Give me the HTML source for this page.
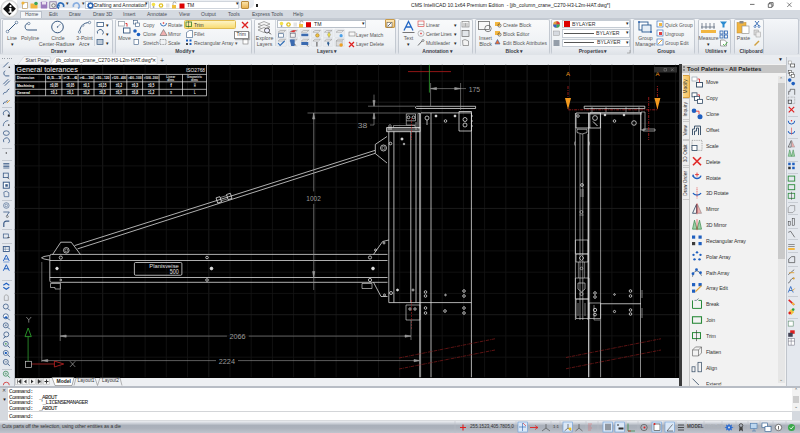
<!DOCTYPE html><html><head><meta charset='utf-8'><style>
*{margin:0;padding:0;box-sizing:border-box}
html,body{width:800px;height:433px;overflow:hidden;background:#dfe3e9;font-family:"Liberation Sans",sans-serif;color:#333}
.a{position:absolute}
.t{position:absolute;white-space:nowrap;line-height:1}
svg{position:absolute;overflow:visible}
</style></head><body><div class="a" style="left:0px;top:0px;width:800px;height:10px;background:#ffffff"></div>
<div class="a" style="left:17px;top:0px;width:237px;height:9.4px;background:linear-gradient(#eceff3,#e3e7ed);border-bottom:1px solid #f8f9fb;border-radius:0 0 5px 0"></div>
<div class="t" style="left:411px;top:2.7px;font-size:5.05px;color:#222;">CMS IntelliCAD 10.1x64 Premium Edition&nbsp; - [jib_column_crane_C270-H3-L2m-HAT.dwg*]</div>
<svg style="left:748.5px;top:0px;" width="8" height="8" viewBox="0 0 8 8"><path d="M1 4.4H5.5" stroke="#333" stroke-width="0.7"/></svg>
<svg style="left:767px;top:1px;" width="8" height="8" viewBox="0 0 8 8"><path d="M1.3 2.8h3.6v3.6h-3.6z M2.5 2.8V1.6h3.6v3.6H4.9" fill="none" stroke="#333" stroke-width="0.7"/></svg>
<svg style="left:786px;top:1px;" width="8" height="8" viewBox="0 0 8 8"><path d="M1.2 1.6L5.6 6M5.6 1.6L1.2 6" stroke="#333" stroke-width="0.6"/></svg>
<svg style="left:21px;top:1px;" width="8" height="8" viewBox="0 0 8 8"><rect x="1.5" y="1.5" width="5" height="6" fill="#fff" stroke="#b08a4a" stroke-width="0.6"/><circle cx="2" cy="2" r="1.6" fill="#f0b43c"/></svg>
<svg style="left:30px;top:1px;" width="8" height="8" viewBox="0 0 8 8"><path d="M0.5 2.5h3l1 1h3v4h-7z" fill="#f2b640"/><circle cx="6" cy="2.5" r="1.8" fill="#3ca454"/></svg>
<svg style="left:40px;top:1px;" width="8" height="8" viewBox="0 0 8 8"><rect x="0.8" y="0.8" width="6.4" height="6.6" rx="0.5" fill="#9b7bbd"/><rect x="2" y="1" width="4" height="2.5" fill="#e9e3f0"/></svg>
<svg style="left:49px;top:1px;" width="8" height="8" viewBox="0 0 8 8"><rect x="0.8" y="0.8" width="6.4" height="6.6" fill="#eee" stroke="#7b6a9a" stroke-width="0.8"/><circle cx="4.5" cy="4.5" r="1.8" fill="none" stroke="#555" stroke-width="0.7"/></svg>
<svg style="left:57px;top:1.5px;" width="8" height="8" viewBox="0 0 8 8"><path d="M2 6.5A3 3 0 1 1 6.5 5" fill="none" stroke="#2b6cb8" stroke-width="1.6"/><path d="M0.5 3.5l2-1l0.5 2.2z" fill="#2b6cb8"/></svg>
<div class="t" style="left:65.5px;top:2.2px;font-size:4.5px;color:#333;">&#9662;</div>
<svg style="left:72px;top:1.5px;" width="8" height="8" viewBox="0 0 8 8"><path d="M6 6.5A3 3 0 1 0 1.5 5" fill="none" stroke="#88aee0" stroke-width="1.6"/></svg>
<div class="t" style="left:81.5px;top:2.2px;font-size:4.5px;color:#333;">&#9662;</div>
<div class="a" style="left:85px;top:0.8px;width:64px;height:8.4px;background:#fff;border:1px solid #c3cad3"></div>
<svg style="left:86.5px;top:2px;" width="7" height="7" viewBox="0 0 7 7"><circle cx="3.5" cy="3.5" r="2.3" fill="none" stroke="#2a62b0" stroke-width="1.4"/><circle cx="3.5" cy="3.5" r="3.2" fill="none" stroke="#2a62b0" stroke-width="0.8" stroke-dasharray="1 1"/></svg>
<div class="t" style="left:94px;top:2.8px;font-size:5.0px;color:#222;">Drafting and Annotation</div>
<div class="t" style="left:144.5px;top:2.4px;font-size:4.5px;color:#222;">&#9662;</div>
<div class="a" style="left:150px;top:0.8px;width:89px;height:8.4px;background:#fff;border:1px solid #d0d5dc"></div>
<svg style="left:151px;top:1.5px;" width="34" height="7" viewBox="0 0 34 7"><circle cx="2.5" cy="2.5" r="1.8" fill="#f4e04a"/><rect x="1.8" y="4" width="1.5" height="2" fill="#aaa"/><circle cx="10" cy="3.5" r="2.3" fill="#e0c020"/><circle cx="10" cy="3.5" r="1" fill="#fff"/><rect x="15" y="1.5" width="3.5" height="4" fill="#e5e5e5"/><rect x="21" y="3" width="4" height="3.5" fill="#f0c040"/><path d="M22 3V1.5a1.5 1.5 0 0 1 3 0" fill="none" stroke="#777" stroke-width="0.6"/><rect x="28.5" y="1.5" width="5" height="5" fill="#dd0000"/></svg>
<div class="t" style="left:187px;top:2.8px;font-size:5.0px;color:#222;">TM</div>
<div class="t" style="left:235.5px;top:2.4px;font-size:4.5px;color:#222;">&#9662;</div>
<div class="a" style="left:241px;top:1px;width:8px;height:8px;background:linear-gradient(#fbe3a8,#e9b455);border:1px solid #b88a3c;border-radius:1px"></div>
<div class="a" style="left:256px;top:3.5px;width:1.5px;height:3px;background:#222"></div>
<div class="a" style="left:0px;top:10px;width:800px;height:8.5px;background:#d5dae1"></div>
<div class="a" style="left:20px;top:10.5px;width:22px;height:8.5px;background:#f4f6f9;border:1px solid #b9c0ca;border-bottom:none"></div>
<div class="t" style="left:25px;top:12.3px;font-size:5.0px;color:#4a4f57;">Home</div>
<div class="t" style="left:49px;top:12.3px;font-size:5.0px;color:#4a4f57;">Edit</div>
<div class="t" style="left:69px;top:12.3px;font-size:5.0px;color:#4a4f57;">Draw</div>
<div class="t" style="left:93px;top:12.3px;font-size:5.0px;color:#4a4f57;">Draw 3D</div>
<div class="t" style="left:123px;top:12.3px;font-size:5.0px;color:#4a4f57;">Insert</div>
<div class="t" style="left:147px;top:12.3px;font-size:5.0px;color:#4a4f57;">Annotate</div>
<div class="t" style="left:179px;top:12.3px;font-size:5.0px;color:#4a4f57;">View</div>
<div class="t" style="left:201px;top:12.3px;font-size:5.0px;color:#4a4f57;">Output</div>
<div class="t" style="left:228px;top:12.3px;font-size:5.0px;color:#4a4f57;">Tools</div>
<div class="t" style="left:252px;top:12.3px;font-size:5.0px;color:#4a4f57;">Express Tools</div>
<div class="t" style="left:293px;top:12.3px;font-size:5.0px;color:#4a4f57;">Help</div>
<svg style="left:0px;top:0px;" width="19" height="19" viewBox="0 0 19 19"><circle cx="9.5" cy="8.8" r="8.6" fill="#e9e9e9" stroke="#bdbdbd" stroke-width="0.6"/><circle cx="9.5" cy="8.8" r="7.2" fill="#fff"/><path d="M9.5 2.4L15.9 8.8L9.5 15.2L3.1 8.8z" fill="#111"/><circle cx="10.5" cy="6.2" r="1.1" fill="#fff"/><path d="M9.2 8h2.2v3.5h1.2v1.2H8.6v-1.2h1.1V9.2h-0.7z" fill="#fff"/></svg>
<div class="a" style="left:0px;top:17.8px;width:800px;height:3px;background:#d5dae1"></div>
<div class="a" style="left:0px;top:18px;width:799px;height:37px;background:linear-gradient(#f4f6f9,#dfe3e9);border:1px solid #c3c9d2;border-radius:2px"></div>
<div class="a" style="left:1.5px;top:18.5px;width:111.0px;height:35.5px;background:linear-gradient(#f9fafb,#eef1f4 75%,#e6e9ed);border:1px solid #c3c9d1;border-bottom-color:#aeb5bf;border-radius:2px"></div>
<div class="a" style="left:2.5px;top:47.5px;width:109.0px;height:6px;background:linear-gradient(#eaedf1,#dfe3e8)"></div>
<div class="t" style="left:9.0px;width:100px;text-align:center;top:48.9px;font-size:5.0px;color:#3b4049;font-weight:bold">Draw&thinsp;&#9662;</div>
<div class="a" style="left:114.5px;top:18.5px;width:137.5px;height:35.5px;background:linear-gradient(#f9fafb,#eef1f4 75%,#e6e9ed);border:1px solid #c3c9d1;border-bottom-color:#aeb5bf;border-radius:2px"></div>
<div class="a" style="left:115.5px;top:47.5px;width:135.5px;height:6px;background:linear-gradient(#eaedf1,#dfe3e8)"></div>
<div class="t" style="left:135.25px;width:100px;text-align:center;top:48.9px;font-size:5.0px;color:#3b4049;font-weight:bold">Modify&thinsp;&#9662;</div>
<div class="a" style="left:254px;top:18.5px;width:142px;height:35.5px;background:linear-gradient(#f9fafb,#eef1f4 75%,#e6e9ed);border:1px solid #c3c9d1;border-bottom-color:#aeb5bf;border-radius:2px"></div>
<div class="a" style="left:255px;top:47.5px;width:140px;height:6px;background:linear-gradient(#eaedf1,#dfe3e8)"></div>
<div class="t" style="left:277.0px;width:100px;text-align:center;top:48.9px;font-size:5.0px;color:#3b4049;font-weight:bold">Layers&thinsp;&#9662;</div>
<div class="a" style="left:398px;top:18.5px;width:75px;height:35.5px;background:linear-gradient(#f9fafb,#eef1f4 75%,#e6e9ed);border:1px solid #c3c9d1;border-bottom-color:#aeb5bf;border-radius:2px"></div>
<div class="a" style="left:399px;top:47.5px;width:73px;height:6px;background:linear-gradient(#eaedf1,#dfe3e8)"></div>
<div class="t" style="left:387.5px;width:100px;text-align:center;top:48.9px;font-size:5.0px;color:#3b4049;font-weight:bold">Annotation&thinsp;&#9662;</div>
<div class="a" style="left:475px;top:18.5px;width:74.70000000000005px;height:35.5px;background:linear-gradient(#f9fafb,#eef1f4 75%,#e6e9ed);border:1px solid #c3c9d1;border-bottom-color:#aeb5bf;border-radius:2px"></div>
<div class="a" style="left:476px;top:47.5px;width:72.70000000000005px;height:6px;background:linear-gradient(#eaedf1,#dfe3e8)"></div>
<div class="t" style="left:464.35px;width:100px;text-align:center;top:48.9px;font-size:5.0px;color:#3b4049;font-weight:bold">Block&thinsp;&#9662;</div>
<div class="a" style="left:551px;top:18.5px;width:80.29999999999995px;height:35.5px;background:linear-gradient(#f9fafb,#eef1f4 75%,#e6e9ed);border:1px solid #c3c9d1;border-bottom-color:#aeb5bf;border-radius:2px"></div>
<div class="a" style="left:552px;top:47.5px;width:78.29999999999995px;height:6px;background:linear-gradient(#eaedf1,#dfe3e8)"></div>
<div class="t" style="left:543.15px;width:100px;text-align:center;top:48.9px;font-size:5.0px;color:#3b4049;font-weight:bold">Properties&thinsp;&#9662;</div>
<div class="a" style="left:633px;top:18.5px;width:62.299999999999955px;height:35.5px;background:linear-gradient(#f9fafb,#eef1f4 75%,#e6e9ed);border:1px solid #c3c9d1;border-bottom-color:#aeb5bf;border-radius:2px"></div>
<div class="a" style="left:634px;top:47.5px;width:60.299999999999955px;height:6px;background:linear-gradient(#eaedf1,#dfe3e8)"></div>
<div class="t" style="left:616.15px;width:100px;text-align:center;top:48.9px;font-size:5.0px;color:#3b4049;font-weight:bold">Groups</div>
<div class="a" style="left:697.7px;top:18.5px;width:33.299999999999955px;height:35.5px;background:linear-gradient(#f9fafb,#eef1f4 75%,#e6e9ed);border:1px solid #c3c9d1;border-bottom-color:#aeb5bf;border-radius:2px"></div>
<div class="a" style="left:698.7px;top:47.5px;width:31.299999999999955px;height:6px;background:linear-gradient(#eaedf1,#dfe3e8)"></div>
<div class="t" style="left:666.35px;width:100px;text-align:center;top:48.9px;font-size:5.0px;color:#3b4049;font-weight:bold">Utilities&thinsp;&#9662;</div>
<div class="a" style="left:733.6px;top:18.5px;width:30.899999999999977px;height:35.5px;background:linear-gradient(#f9fafb,#eef1f4 75%,#e6e9ed);border:1px solid #c3c9d1;border-bottom-color:#aeb5bf;border-radius:2px"></div>
<div class="a" style="left:734.6px;top:47.5px;width:28.899999999999977px;height:6px;background:linear-gradient(#eaedf1,#dfe3e8)"></div>
<div class="t" style="left:701.05px;width:100px;text-align:center;top:48.9px;font-size:5.0px;color:#3b4049;font-weight:bold">Clipboard</div>
<div class="a" style="left:0px;top:54px;width:800px;height:3px;background:#dfe3e8"></div>
<svg style="left:5px;top:20px;" width="14" height="14" viewBox="0 0 14 14"><path d="M2.5 11.5L11.5 2.5" stroke="#36577f" stroke-width="1"/><circle cx="2.5" cy="11.5" r="1.3" fill="#fff" stroke="#36577f" stroke-width="0.6"/><circle cx="11.5" cy="2.5" r="1.3" fill="#fff" stroke="#36577f" stroke-width="0.6"/></svg>
<div class="t" style="left:-38px;width:100px;text-align:center;top:36px;font-size:5.2px;color:#555;">Line</div>
<div class="t" style="left:-38px;width:100px;text-align:center;top:41.5px;font-size:5.2px;color:#222;">&#9662;</div>
<svg style="left:23px;top:20px;" width="15" height="14" viewBox="0 0 15 14"><path d="M5.5 3.5C2.5 3.5 1.5 6 2.5 8.5C3 9.8 4 10 6 10H14" fill="none" stroke="#36577f" stroke-width="1"/><circle cx="5.8" cy="3.5" r="1.2" fill="#fff" stroke="#36577f" stroke-width="0.6"/></svg>
<div class="t" style="left:-20px;width:100px;text-align:center;top:36px;font-size:5.2px;color:#555;">Polyline</div>
<svg style="left:50px;top:20px;" width="15" height="14" viewBox="0 0 15 14"><circle cx="7.5" cy="7" r="5.8" fill="none" stroke="#36577f" stroke-width="1"/><path d="M7.5 7L10.5 4" stroke="#36577f" stroke-width="0.6"/><circle cx="7.5" cy="7" r="0.7" fill="#36577f"/></svg>
<div class="t" style="left:8px;width:100px;text-align:center;top:36px;font-size:5.2px;color:#555;">Circle</div>
<div class="t" style="left:7px;width:100px;text-align:center;top:41.5px;font-size:5.2px;color:#555;">Center-Radius&#9662;</div>
<svg style="left:77px;top:20px;" width="15" height="14" viewBox="0 0 15 14"><path d="M2.5 12C3 6 7 2.5 12.5 2.5" fill="none" stroke="#36577f" stroke-width="1"/><circle cx="2.5" cy="12" r="1.2" fill="#fff" stroke="#36577f" stroke-width="0.6"/><circle cx="12.5" cy="2.5" r="1.2" fill="#fff" stroke="#36577f" stroke-width="0.6"/><circle cx="6" cy="5.5" r="0.9" fill="#fff" stroke="#36577f" stroke-width="0.5"/></svg>
<div class="t" style="left:34.5px;width:100px;text-align:center;top:36px;font-size:5.2px;color:#555;">3-Point</div>
<div class="t" style="left:34.5px;width:100px;text-align:center;top:41.5px;font-size:5.2px;color:#555;">Arc&#9662;</div>
<div class="a" style="left:94px;top:20px;width:0.7px;height:26px;background:#d3d7dd"></div>
<svg style="left:96px;top:21px;" width="14" height="26" viewBox="0 0 14 26"><rect x="1" y="1.5" width="6.5" height="4" fill="#fff" stroke="#36577f" stroke-width="0.8"/><path d="M1.5 12.5a3 3 0 1 1 5 1" fill="none" stroke="#36577f" stroke-width="0.9"/><rect x="1" y="18.5" width="6" height="5" fill="#bfcbd8" stroke="#36577f" stroke-width="0.7"/><text x="9.5" y="5.5" font-size="4.5" fill="#222">&#9662;</text><text x="9.5" y="14.5" font-size="4.5" fill="#222">&#9662;</text><text x="9.5" y="23.5" font-size="4.5" fill="#222">&#9662;</text></svg>
<svg style="left:117px;top:20px;" width="15" height="15" viewBox="0 0 15 15"><rect x="1.5" y="1.5" width="6" height="4.5" fill="#fff" stroke="#8a94a0" stroke-width="0.7"/><rect x="6.5" y="8" width="6.5" height="5" fill="#fff" stroke="#36577f" stroke-width="0.9"/><path d="M8.5 3.5H10V6.5" fill="none" stroke="#d22" stroke-width="0.9"/></svg>
<div class="t" style="left:74.5px;width:100px;text-align:center;top:36px;font-size:5.2px;color:#555;">Move</div>
<svg style="left:133px;top:20px;" width="9" height="27" viewBox="0 0 9 27"><rect x="0.5" y="0.5" width="4" height="3.5" fill="#fff" stroke="#36577f" stroke-width="0.6"/><rect x="2.5" y="3" width="4" height="3.5" fill="#fff" stroke="#36577f" stroke-width="0.6"/><circle cx="2" cy="11" r="1.8" fill="#1a5fc0"/><circle cx="5.5" cy="14.5" r="1.8" fill="#1a5fc0"/><rect x="1" y="19.5" width="4.5" height="5" fill="#fff" stroke="#36577f" stroke-width="0.6"/></svg>
<div class="t" style="left:143px;top:23.6px;font-size:4.95px;color:#555;">Copy</div>
<div class="t" style="left:143px;top:32.6px;font-size:4.95px;color:#555;">Clone</div>
<div class="t" style="left:143px;top:41.6px;font-size:4.95px;color:#555;">Stretch</div>
<svg style="left:159px;top:20px;" width="9" height="27" viewBox="0 0 9 27"><path d="M1.5 3a3 3 0 0 0 6 0" fill="none" stroke="#2a6ab5" stroke-width="0.9"/><circle cx="4.5" cy="3" r="0.8" fill="#d22"/><path d="M4.5 9.5L1 15.5H8z" fill="#f0b0b0" stroke="#666" stroke-width="0.6"/><rect x="1" y="19.5" width="6" height="5" fill="none" stroke="#666" stroke-width="0.6" stroke-dasharray="1 0.6"/></svg>
<div class="t" style="left:168px;top:23.6px;font-size:4.95px;color:#555;">Rotate</div>
<div class="t" style="left:168px;top:32.6px;font-size:4.95px;color:#555;">Mirror</div>
<div class="t" style="left:168px;top:41.6px;font-size:4.95px;color:#555;">Scale</div>
<div class="a" style="left:184.4px;top:19.8px;width:52px;height:9px;background:linear-gradient(#fdf4c4,#f9dc74);border:1px solid #e0bb50;border-radius:1.5px"></div>
<svg style="left:185px;top:20px;" width="9" height="27" viewBox="0 0 9 27"><rect x="1" y="2" width="5.5" height="4.5" fill="none" stroke="#4a8a30" stroke-width="0.9"/><path d="M3.5 1v6.5" stroke="#333" stroke-width="0.5"/><path d="M1.5 17.5V12.5L4.5 10.5H7.5V17.5z" fill="#fff" stroke="#36577f" stroke-width="0.6"/><rect x="1" y="19.5" width="2" height="2" fill="#1a5fc0"/><rect x="4.5" y="19.5" width="2" height="2" fill="#1a5fc0"/><rect x="1" y="23" width="2" height="2" fill="#444"/><rect x="4.5" y="23" width="2" height="2" fill="#1a5fc0"/></svg>
<div class="t" style="left:194px;top:23.6px;font-size:4.95px;color:#333;">Trim</div>
<div class="t" style="left:194px;top:32.6px;font-size:4.95px;color:#555;">Fillet</div>
<div class="t" style="left:194px;top:41.6px;font-size:4.95px;color:#555;">Rectangular Array &#9662;</div>
<svg style="left:241px;top:21px;" width="8" height="8" viewBox="0 0 8 8"><path d="M1 1L7 7M7 1L1 7" stroke="#dd2222" stroke-width="1.4"/></svg>
<svg style="left:242px;top:38px;" width="9" height="8" viewBox="0 0 9 8"><rect x="1" y="1" width="5" height="5" fill="#fff" stroke="#777" stroke-width="0.6"/></svg>
<div class="a" style="left:234px;top:31px;width:15px;height:8px;background:#fff;border:1px solid #8a8a8a;box-shadow:1px 1px 1px rgba(0,0,0,.25)"></div>
<div class="t" style="left:236.5px;top:32.8px;font-size:4.8px;color:#333;">Trim</div>
<svg style="left:256px;top:20px;" width="16" height="15" viewBox="0 0 16 15"><path d="M2 4L8 1.5L14 4L8 6.5z" fill="#f4f4f4" stroke="#777" stroke-width="0.6"/><path d="M2 7L8 4.5L14 7L8 9.5z" fill="#f4f4f4" stroke="#777" stroke-width="0.6"/><path d="M2 10L8 7.5L14 10L8 12.5z" fill="#f4f4f4" stroke="#777" stroke-width="0.6"/><circle cx="11" cy="10.5" r="2.5" fill="#eef" stroke="#333" stroke-width="0.8"/><path d="M12.8 12.3L14.8 14.3" stroke="#333" stroke-width="1"/></svg>
<div class="t" style="left:214.5px;width:100px;text-align:center;top:36px;font-size:5.2px;color:#555;">Explore</div>
<div class="t" style="left:214.5px;width:100px;text-align:center;top:41.8px;font-size:5.2px;color:#555;">Layers</div>
<div class="a" style="left:275px;top:20px;width:0.7px;height:26px;background:#d3d7dd"></div>
<div class="a" style="left:277.3px;top:19.9px;width:88.7px;height:8.4px;background:#fff;border:1px solid #b9c0c9"></div>
<svg style="left:279px;top:20.5px;" width="34" height="7" viewBox="0 0 34 7"><circle cx="2.5" cy="2.5" r="1.8" fill="#f4e04a"/><rect x="1.8" y="4" width="1.5" height="2" fill="#aaa"/><circle cx="9.5" cy="3.5" r="2.3" fill="#e0c020"/><circle cx="9.5" cy="3.5" r="1" fill="#fff"/><rect x="14.5" y="1.5" width="3.5" height="4" fill="#e5e5e5"/><rect x="20" y="3" width="4" height="3.5" fill="#f0c040"/><path d="M21 3V1.5a1.5 1.5 0 0 1 3 0" fill="none" stroke="#777" stroke-width="0.6"/><rect x="27" y="1.2" width="5" height="5" fill="#dd0000"/></svg>
<div class="t" style="left:314px;top:21.5px;font-size:5.2px;color:#222;">TM</div>
<div class="t" style="left:362px;top:21.8px;font-size:4.5px;color:#222;">&#9662;</div>
<div class="a" style="left:384.6px;top:19.3px;width:10px;height:9px;background:linear-gradient(#fde8b8,#eec070);border:1px solid #c99a48;border-radius:1px"></div>
<svg style="left:386px;top:20.5px;" width="7" height="7" viewBox="0 0 7 7"><rect x="1" y="1.5" width="5" height="4.5" fill="#fff" stroke="#444" stroke-width="0.5"/><path d="M2 5L5 2" stroke="#333" stroke-width="0.7"/></svg>
<svg style="left:276px;top:28.8px;" width="72" height="19" viewBox="0 0 72 19"><g transform="translate(0.6,0.2)"><rect x="0" y="0" width="10" height="8.4" rx="1" fill="#e9ecf0" stroke="#d3d8de" stroke-width="0.4"/><path d="M1.5 3L3.5 1.3H9L7 3z" fill="#f2f2f2" stroke="#8a8a8a" stroke-width="0.5"/><rect x="2" y="4.5" width="5" height="3.5" fill="#fff" stroke="#4a6a90" stroke-width="0.7"/></g><g transform="translate(12.2,0.2)"><rect x="0" y="0" width="10" height="8.4" rx="1" fill="#e9ecf0" stroke="#d3d8de" stroke-width="0.4"/><path d="M1.5 3L3.5 1.3H9L7 3z" fill="#f2f2f2" stroke="#8a8a8a" stroke-width="0.5"/><path d="M2 2.5L5 1H8L6 3z" fill="#d33"/><rect x="2" y="4" width="5" height="4" fill="#f3f3f3" stroke="#556" stroke-width="0.6"/></g><g transform="translate(23.8,0.2)"><rect x="0" y="0" width="10" height="8.4" rx="1" fill="#e9ecf0" stroke="#d3d8de" stroke-width="0.4"/><path d="M1.5 3L3.5 1.3H9L7 3z" fill="#f2f2f2" stroke="#8a8a8a" stroke-width="0.5"/><rect x="1.5" y="4.5" width="7" height="2.5" fill="#3a6ab0"/></g><g transform="translate(35.4,0.2)"><rect x="0" y="0" width="10" height="8.4" rx="1" fill="#e9ecf0" stroke="#d3d8de" stroke-width="0.4"/><path d="M1.5 3L3.5 1.3H9L7 3z" fill="#f2f2f2" stroke="#8a8a8a" stroke-width="0.5"/><circle cx="6" cy="6.2" r="1.8" fill="#f0c040" stroke="#7a5a20" stroke-width="0.4"/></g><g transform="translate(47.0,0.2)"><rect x="0" y="0" width="10" height="8.4" rx="1" fill="#e9ecf0" stroke="#d3d8de" stroke-width="0.4"/><path d="M1.5 3L3.5 1.3H9L7 3z" fill="#f2f2f2" stroke="#8a8a8a" stroke-width="0.5"/><path d="M6 2.5L7.5 5.5L6 8.5L4.5 5.5z" fill="#f0e040" stroke="#777" stroke-width="0.4"/></g><g transform="translate(58.6,0.2)"><rect x="0" y="0" width="10" height="8.4" rx="1" fill="#e9ecf0" stroke="#d3d8de" stroke-width="0.4"/><path d="M1.5 3L3.5 1.3H9L7 3z" fill="#f2f2f2" stroke="#8a8a8a" stroke-width="0.5"/><circle cx="6.5" cy="6.5" r="1.6" fill="#4aa0e8"/></g><g transform="translate(0.6,9.0)"><rect x="0" y="0" width="10" height="8.4" rx="1" fill="#e9ecf0" stroke="#d3d8de" stroke-width="0.4"/><path d="M1.5 3L3.5 1.3H9L7 3z" fill="#f2f2f2" stroke="#8a8a8a" stroke-width="0.5"/><path d="M1.5 5L3.5 7.5L8 3" fill="none" stroke="#2a6ab5" stroke-width="1.1"/></g><g transform="translate(12.2,9.0)"><rect x="0" y="0" width="10" height="8.4" rx="1" fill="#e9ecf0" stroke="#d3d8de" stroke-width="0.4"/><path d="M1.5 3L3.5 1.3H9L7 3z" fill="#f2f2f2" stroke="#8a8a8a" stroke-width="0.5"/><path d="M1.5 1.5H6.5V8H3z" fill="#3a6ab0"/><path d="M6 6L8 7.5" stroke="#333" stroke-width="0.6"/></g><g transform="translate(23.8,9.0)"><rect x="0" y="0" width="10" height="8.4" rx="1" fill="#e9ecf0" stroke="#d3d8de" stroke-width="0.4"/><path d="M1.5 3L3.5 1.3H9L7 3z" fill="#f2f2f2" stroke="#8a8a8a" stroke-width="0.5"/><rect x="1.5" y="4" width="7" height="3" fill="#3a6ab0"/><path d="M7 7L8.5 8.5" stroke="#333" stroke-width="0.6"/></g><g transform="translate(35.4,9.0)"><rect x="0" y="0" width="10" height="8.4" rx="1" fill="#e9ecf0" stroke="#d3d8de" stroke-width="0.4"/><path d="M1.5 3L3.5 1.3H9L7 3z" fill="#f2f2f2" stroke="#8a8a8a" stroke-width="0.5"/><path d="M5.5 4V8.5" stroke="#666" stroke-width="1.2"/></g><g transform="translate(47.0,9.0)"><rect x="0" y="0" width="10" height="8.4" rx="1" fill="#e9ecf0" stroke="#d3d8de" stroke-width="0.4"/><path d="M1.5 3L3.5 1.3H9L7 3z" fill="#f2f2f2" stroke="#8a8a8a" stroke-width="0.5"/><path d="M5 3.5L6.5 5L5.5 8.5L4 5z" fill="#2a5a90"/></g><g transform="translate(58.6,9.0)"><rect x="0" y="0" width="10" height="8.4" rx="1" fill="#e9ecf0" stroke="#d3d8de" stroke-width="0.4"/><path d="M1.5 3L3.5 1.3H9L7 3z" fill="#f2f2f2" stroke="#8a8a8a" stroke-width="0.5"/><rect x="1.5" y="3" width="6" height="5" fill="#ddd" stroke="#888" stroke-width="0.4"/><circle cx="6.5" cy="7" r="1.7" fill="#f0a020"/></g></svg>
<svg style="left:348px;top:30.5px;" width="8" height="17" viewBox="0 0 8 17"><rect x="1" y="1" width="6" height="4" fill="#f6f6f6" stroke="#666" stroke-width="0.5"/><path d="M1 11L6 16M6 11L1 16" stroke="#dd2222" stroke-width="1.3"/></svg>
<div class="t" style="left:356px;top:33.5px;font-size:4.95px;color:#555;">Layer Match</div>
<div class="t" style="left:356px;top:42.5px;font-size:4.95px;color:#555;">Layer Delete</div>
<svg style="left:401px;top:20px;" width="15" height="14" viewBox="0 0 15 14"><path d="M3 10.5L7.5 1.5L12 10.5M4.8 7H10.2" fill="none" stroke="#2266c4" stroke-width="1.3"/><path d="M1.5 12.5H13.5" stroke="#555" stroke-width="0.8"/></svg>
<div class="t" style="left:358.5px;width:100px;text-align:center;top:36px;font-size:5.2px;color:#555;">Text</div>
<div class="t" style="left:358.5px;width:100px;text-align:center;top:41.5px;font-size:5.2px;color:#222;">&#9662;</div>
<svg style="left:417px;top:20px;" width="9" height="27" viewBox="0 0 9 27"><rect x="1" y="1" width="6" height="5.5" fill="none" stroke="#d33" stroke-width="0.6"/><path d="M1 4.5H7" stroke="#777" stroke-width="0.5"/><circle cx="4" cy="13.5" r="3" fill="none" stroke="#999" stroke-width="0.6"/><path d="M3 13.5H5M4 12.5V14.5" stroke="#d33" stroke-width="0.6"/><path d="M1 25.5L5 21" stroke="#333" stroke-width="0.7"/><circle cx="6" cy="20.5" r="1" fill="none" stroke="#333" stroke-width="0.5"/></svg>
<div class="t" style="left:426px;top:23.6px;font-size:4.95px;color:#555;">Linear</div>
<div class="t" style="left:426px;top:32.6px;font-size:4.95px;color:#555;letter-spacing:-0.2px">Center Lines</div>
<div class="t" style="left:426px;top:41.6px;font-size:4.95px;color:#555;">Multileader</div>
<div class="t" style="left:454px;top:24.0px;font-size:4.5px;color:#222;">&#9662;</div>
<div class="t" style="left:454px;top:33.0px;font-size:4.5px;color:#222;">&#9662;</div>
<div class="t" style="left:454px;top:42.0px;font-size:4.5px;color:#222;">&#9662;</div>
<div class="a" style="left:459.5px;top:22px;width:0.6px;height:24px;background:#d3d7dd"></div>
<svg style="left:461px;top:20px;" width="10" height="27" viewBox="0 0 10 27"><rect x="1" y="1.5" width="7" height="5.5" fill="#f3f3f3" stroke="#777" stroke-width="0.6"/><path d="M3 3V6.5M4.5 3V6.5M6 3V6.5" stroke="#666" stroke-width="0.5"/><rect x="1" y="10.5" width="7" height="6" fill="#e2e6ea" stroke="#555" stroke-width="0.6"/><path d="M1.5 20.5L4 19.5L7.5 21V25.5H2z" fill="#f3f3f3" stroke="#666" stroke-width="0.6"/></svg>
<svg style="left:477px;top:20px;" width="16" height="14" viewBox="0 0 16 14"><rect x="1.5" y="1.5" width="11" height="8" fill="#f8f8f8" stroke="#555" stroke-width="0.7"/><circle cx="11" cy="8.5" r="3.2" fill="none" stroke="#555" stroke-width="0.7"/></svg>
<div class="t" style="left:435.5px;width:100px;text-align:center;top:36px;font-size:5.2px;color:#555;">Insert</div>
<div class="t" style="left:435.5px;width:100px;text-align:center;top:41.8px;font-size:5.2px;color:#555;">Block</div>
<svg style="left:494px;top:20px;" width="9" height="27" viewBox="0 0 9 27"><rect x="1" y="2" width="5" height="4" fill="#f2b640"/><circle cx="5.5" cy="5.5" r="1.6" fill="none" stroke="#333" stroke-width="0.6"/><rect x="1" y="11" width="5" height="4" fill="#f2b640"/><circle cx="5.5" cy="14.5" r="1.6" fill="none" stroke="#333" stroke-width="0.6"/><path d="M1 24L3.5 19.5L6 24z" fill="#f07030" stroke="#2a62b0" stroke-width="0.6"/></svg>
<div class="t" style="left:503px;top:23.6px;font-size:4.95px;color:#555;">Create Block</div>
<div class="t" style="left:503px;top:32.6px;font-size:4.95px;color:#555;">Block Editor</div>
<div class="t" style="left:503px;top:41.6px;font-size:4.95px;color:#555;">Edit Block Attributes</div>
<svg style="left:552px;top:20px;" width="9" height="27" viewBox="0 0 9 27"><circle cx="4.5" cy="4.5" r="3.3" fill="#e0a040"/><path d="M4.5 4.5L4.5 1.2A3.3 3.3 0 0 1 7.8 4.5z" fill="#d33"/><path d="M4.5 4.5L7.8 4.5A3.3 3.3 0 0 1 4.5 7.8z" fill="#3a6"/><path d="M4.5 4.5L4.5 7.8A3.3 3.3 0 0 1 1.2 4.5z" fill="#36c"/><rect x="1.5" y="11" width="6" height="4.5" fill="#d6dae0" stroke="#888" stroke-width="0.4"/><path d="M1.5 21H7.5M1.5 23H7.5M1.5 25H7.5" stroke="#3a4a5e" stroke-width="1"/></svg>
<div class="a" style="left:562.2px;top:19.9px;width:67.5px;height:8.3px;background:#fff;border:1px solid #c5ccd4"></div>
<div class="t" style="left:625.5px;top:21.9px;font-size:4.5px;color:#222;">&#9662;</div>
<div class="a" style="left:562.2px;top:29.3px;width:67.5px;height:8.3px;background:#fff;border:1px solid #c5ccd4"></div>
<div class="t" style="left:625.5px;top:31.3px;font-size:4.5px;color:#222;">&#9662;</div>
<div class="a" style="left:562.2px;top:38.5px;width:67.5px;height:8.3px;background:#fff;border:1px solid #c5ccd4"></div>
<div class="t" style="left:625.5px;top:40.5px;font-size:4.5px;color:#222;">&#9662;</div>
<div class="a" style="left:564px;top:21.4px;width:6px;height:5.4px;background:#dd0000"></div>
<div class="t" style="left:572px;top:21.5px;font-size:5.2px;color:#333;">BYLAYER</div>
<div class="a" style="left:564px;top:33.2px;width:30px;height:0.7px;background:#555"></div>
<div class="t" style="left:596px;top:30.9px;font-size:5.2px;color:#333;">BYLAYER</div>
<div class="a" style="left:564px;top:42.3px;width:30px;height:0.7px;background:#555"></div>
<div class="t" style="left:597px;top:40.1px;font-size:5.2px;color:#333;">BYLAYER</div>
<svg style="left:626px;top:49px;" width="5" height="5" viewBox="0 0 5 5"><path d="M1 4h3V1" fill="none" stroke="#888" stroke-width="0.6"/></svg>
<svg style="left:637px;top:20px;" width="16" height="14" viewBox="0 0 16 14"><rect x="2" y="2" width="9" height="8" fill="#fff" stroke="#2a5a90" stroke-width="0.9"/><rect x="5" y="5" width="9" height="7" fill="#e6eef6" stroke="#2a5a90" stroke-width="0.9"/><circle cx="2" cy="2" r="0.9" fill="#2a62b0"/><circle cx="14" cy="12" r="0.9" fill="#2a62b0"/></svg>
<div class="t" style="left:595.5px;width:100px;text-align:center;top:36px;font-size:5.2px;color:#555;">Group</div>
<div class="t" style="left:595.5px;width:100px;text-align:center;top:41.8px;font-size:5.2px;color:#555;">Manager</div>
<svg style="left:656px;top:20px;" width="9" height="27" viewBox="0 0 9 27"><rect x="1" y="1" width="6" height="6" fill="#fff" stroke="#2a62b0" stroke-width="0.6"/><rect x="3" y="3" width="3" height="3" fill="#f2b640"/><rect x="1" y="10" width="6" height="6" fill="#fff" stroke="#2a62b0" stroke-width="0.6"/><rect x="3" y="12" width="3" height="3" fill="#e04040"/><rect x="1" y="19" width="6" height="6" fill="#fff" stroke="#2a62b0" stroke-width="0.6"/><path d="M2 24L6 20" stroke="#e0a030" stroke-width="1"/></svg>
<div class="t" style="left:665px;top:23.6px;font-size:4.95px;color:#555;">Quick Group</div>
<div class="t" style="left:665px;top:32.6px;font-size:4.95px;color:#555;">Ungroup</div>
<div class="t" style="left:665px;top:41.6px;font-size:4.95px;color:#555;">Group Edit</div>
<svg style="left:700px;top:20px;" width="17" height="14" viewBox="0 0 17 14"><path d="M2 3V9M6 3V9M10 3V9M14 3V9M1 7H15" stroke="#4a5a6e" stroke-width="0.7"/><rect x="1" y="10" width="15" height="3" fill="#f2b640"/></svg>
<div class="t" style="left:658.5px;width:100px;text-align:center;top:36px;font-size:5.2px;color:#555;">Measure</div>
<div class="t" style="left:658.5px;width:100px;text-align:center;top:41.5px;font-size:5.2px;color:#222;">&#9662;</div>
<svg style="left:719px;top:20px;" width="10" height="27" viewBox="0 0 10 27"><path d="M1 1.5H8L5.5 4.5V7.5H3.5V4.5z" fill="#2a8ad0"/><rect x="1" y="11" width="3" height="3" fill="none" stroke="#2a62b0" stroke-width="0.8"/><rect x="5.5" y="11" width="3" height="3" fill="none" stroke="#2a62b0" stroke-width="0.8"/><rect x="1" y="15" width="3" height="3" fill="none" stroke="#2a62b0" stroke-width="0.8"/><rect x="5.5" y="15" width="3" height="3" fill="none" stroke="#2a62b0" stroke-width="0.8"/><path d="M1.5 20H5.5L7.5 22V26H1.5z" fill="#fff" stroke="#666" stroke-width="0.6"/><path d="M4 24L5.5 25.5L8.5 22" stroke="#3a3" stroke-width="0.8" fill="none"/></svg>
<svg style="left:735px;top:20px;" width="16" height="14" viewBox="0 0 16 14"><rect x="2" y="2.5" width="9" height="10.5" fill="#f0b440" stroke="#c08a30" stroke-width="0.5"/><rect x="4.5" y="1" width="4" height="2.5" fill="#888"/><rect x="7" y="6" width="7" height="7.5" fill="#fff" stroke="#888" stroke-width="0.6"/></svg>
<div class="t" style="left:693.5px;width:100px;text-align:center;top:36px;font-size:5.2px;color:#555;">Paste</div>
<svg style="left:753px;top:20px;" width="9" height="27" viewBox="0 0 9 27"><path d="M2 1L6 6M6 1L2 6" stroke="#2a62b0" stroke-width="0.9"/><circle cx="2" cy="6.5" r="1" fill="none" stroke="#2a62b0" stroke-width="0.7"/><circle cx="6" cy="6.5" r="1" fill="none" stroke="#2a62b0" stroke-width="0.7"/><rect x="1" y="10" width="4.5" height="5" fill="#ddd" stroke="#999" stroke-width="0.5"/><rect x="3" y="12" width="4.5" height="5" fill="#eee" stroke="#999" stroke-width="0.5"/><path d="M1.5 25.5L6 21" stroke="#d0a040" stroke-width="1.4"/></svg>
<div class="a" style="left:0px;top:54.5px;width:800px;height:10px;background:#e9ecf0"></div>
<svg style="left:0px;top:54px;" width="800" height="11" viewBox="0 0 800 11"><path d="M18 10.5L24 2.5H50L52 10.5z" fill="#f3f4f6" stroke="#c5c9cf" stroke-width="0.5"/><path d="M50 10.5L56 2.5H157V10.5z" fill="#ffffff" stroke="#c5c9cf" stroke-width="0.5"/></svg>
<div class="t" style="left:25.5px;top:58px;font-size:5.0px;color:#333;">Start Page</div>
<div class="t" style="left:56px;top:58px;font-size:5.0px;color:#222;">jib_column_crane_C270-H3-L2m-HAT.dwg*</div>
<div class="t" style="left:151.5px;top:57.8px;font-size:5.0px;color:#222;">&#10005;</div>
<div class="t" style="left:160px;top:56.8px;font-size:7px;color:#333;">+</div>
<div class="t" style="left:778px;top:57.3px;font-size:5px;color:#222;">&#9660;</div>
<div class="a" style="left:2px;top:57.5px;width:10px;height:1px;background:repeating-linear-gradient(90deg,#9aa0a8 0 0.8px,transparent 0.8px 1.8px)"></div>
<div class="a" style="left:0px;top:64px;width:14.5px;height:323px;background:#e4e8ee;border-right:1px solid #b9bec6"></div>
<div class="a" style="left:14.5px;top:64.5px;width:665px;height:313px;background:#000"></div>
<svg style="left:0;top:0" width="800" height="433" viewBox="0 0 800 433"><defs><clipPath id="dc"><rect x="14.5" y="64.5" width="665" height="313"/></clipPath></defs><g clip-path="url(#dc)"><line x1="17.8" y1="64.5" x2="17.8" y2="377.5" stroke="#151515" stroke-width="0.8"/><line x1="39.0" y1="64.5" x2="39.0" y2="377.5" stroke="#151515" stroke-width="0.8"/><line x1="60.2" y1="64.5" x2="60.2" y2="377.5" stroke="#151515" stroke-width="0.8"/><line x1="81.4" y1="64.5" x2="81.4" y2="377.5" stroke="#151515" stroke-width="0.8"/><line x1="102.7" y1="64.5" x2="102.7" y2="377.5" stroke="#222222" stroke-width="0.8"/><line x1="123.9" y1="64.5" x2="123.9" y2="377.5" stroke="#151515" stroke-width="0.8"/><line x1="145.1" y1="64.5" x2="145.1" y2="377.5" stroke="#151515" stroke-width="0.8"/><line x1="166.3" y1="64.5" x2="166.3" y2="377.5" stroke="#151515" stroke-width="0.8"/><line x1="187.5" y1="64.5" x2="187.5" y2="377.5" stroke="#151515" stroke-width="0.8"/><line x1="208.8" y1="64.5" x2="208.8" y2="377.5" stroke="#222222" stroke-width="0.8"/><line x1="230.0" y1="64.5" x2="230.0" y2="377.5" stroke="#151515" stroke-width="0.8"/><line x1="251.2" y1="64.5" x2="251.2" y2="377.5" stroke="#151515" stroke-width="0.8"/><line x1="272.4" y1="64.5" x2="272.4" y2="377.5" stroke="#151515" stroke-width="0.8"/><line x1="293.6" y1="64.5" x2="293.6" y2="377.5" stroke="#151515" stroke-width="0.8"/><line x1="314.9" y1="64.5" x2="314.9" y2="377.5" stroke="#222222" stroke-width="0.8"/><line x1="336.1" y1="64.5" x2="336.1" y2="377.5" stroke="#151515" stroke-width="0.8"/><line x1="357.3" y1="64.5" x2="357.3" y2="377.5" stroke="#151515" stroke-width="0.8"/><line x1="378.5" y1="64.5" x2="378.5" y2="377.5" stroke="#151515" stroke-width="0.8"/><line x1="399.7" y1="64.5" x2="399.7" y2="377.5" stroke="#151515" stroke-width="0.8"/><line x1="421.0" y1="64.5" x2="421.0" y2="377.5" stroke="#222222" stroke-width="0.8"/><line x1="442.2" y1="64.5" x2="442.2" y2="377.5" stroke="#151515" stroke-width="0.8"/><line x1="463.4" y1="64.5" x2="463.4" y2="377.5" stroke="#151515" stroke-width="0.8"/><line x1="484.6" y1="64.5" x2="484.6" y2="377.5" stroke="#151515" stroke-width="0.8"/><line x1="505.8" y1="64.5" x2="505.8" y2="377.5" stroke="#151515" stroke-width="0.8"/><line x1="527.1" y1="64.5" x2="527.1" y2="377.5" stroke="#222222" stroke-width="0.8"/><line x1="548.3" y1="64.5" x2="548.3" y2="377.5" stroke="#151515" stroke-width="0.8"/><line x1="569.5" y1="64.5" x2="569.5" y2="377.5" stroke="#151515" stroke-width="0.8"/><line x1="590.7" y1="64.5" x2="590.7" y2="377.5" stroke="#151515" stroke-width="0.8"/><line x1="611.9" y1="64.5" x2="611.9" y2="377.5" stroke="#151515" stroke-width="0.8"/><line x1="633.2" y1="64.5" x2="633.2" y2="377.5" stroke="#222222" stroke-width="0.8"/><line x1="654.4" y1="64.5" x2="654.4" y2="377.5" stroke="#151515" stroke-width="0.8"/><line x1="675.6" y1="64.5" x2="675.6" y2="377.5" stroke="#151515" stroke-width="0.8"/><line x1="14.5" y1="81.0" x2="679" y2="81.0" stroke="#151515" stroke-width="0.8"/><line x1="14.5" y1="102.2" x2="679" y2="102.2" stroke="#222222" stroke-width="0.8"/><line x1="14.5" y1="123.5" x2="679" y2="123.5" stroke="#151515" stroke-width="0.8"/><line x1="14.5" y1="144.7" x2="679" y2="144.7" stroke="#151515" stroke-width="0.8"/><line x1="14.5" y1="165.9" x2="679" y2="165.9" stroke="#151515" stroke-width="0.8"/><line x1="14.5" y1="187.2" x2="679" y2="187.2" stroke="#151515" stroke-width="0.8"/><line x1="14.5" y1="208.4" x2="679" y2="208.4" stroke="#222222" stroke-width="0.8"/><line x1="14.5" y1="229.7" x2="679" y2="229.7" stroke="#151515" stroke-width="0.8"/><line x1="14.5" y1="250.9" x2="679" y2="250.9" stroke="#151515" stroke-width="0.8"/><line x1="14.5" y1="272.2" x2="679" y2="272.2" stroke="#151515" stroke-width="0.8"/><line x1="14.5" y1="293.4" x2="679" y2="293.4" stroke="#151515" stroke-width="0.8"/><line x1="14.5" y1="314.7" x2="679" y2="314.7" stroke="#222222" stroke-width="0.8"/><line x1="14.5" y1="335.9" x2="679" y2="335.9" stroke="#151515" stroke-width="0.8"/><line x1="14.5" y1="357.2" x2="679" y2="357.2" stroke="#151515" stroke-width="0.8"/><g stroke="#e8e8e8" stroke-width="0.7" fill="none"><path d="M15 74.4H206.5M15 81.8H206.5M15 89.3H206.5M15 95.8H206.5M206.5 64.5V95.8"/><path d="M15 74.4V95.8"/><path d="M45.6 74.4V95.8"/><path d="M61.9 74.4V95.8"/><path d="M78.1 74.4V95.8"/><path d="M94 74.4V95.8"/><path d="M110.3 74.4V95.8"/><path d="M126.8 74.4V95.8"/><path d="M142.6 74.4V95.8"/><path d="M159.1 74.4V95.8"/><path d="M182.5 74.4V95.8"/></g><text x="16.3" y="72" font-size="7.8" fill="#f4f4f4" textLength="61.5" lengthAdjust="spacingAndGlyphs">General tolerances</text><text x="186" y="72" font-size="5" fill="#f0f0f0" textLength="19" lengthAdjust="spacingAndGlyphs">ISO2768</text><text x="17" y="79.3" font-size="4.3" font-weight="bold" fill="#fff" textLength="17.3" lengthAdjust="spacingAndGlyphs">Dimension</text><text x="54.05" y="79.3" font-size="3.6" font-weight="bold" fill="#fff" text-anchor="middle" textLength="14.1" lengthAdjust="spacingAndGlyphs">0,5...3</text><text x="70.3" y="79.3" font-size="3.6" font-weight="bold" fill="#fff" text-anchor="middle" textLength="14.0" lengthAdjust="spacingAndGlyphs">>3...6</text><text x="86.35" y="79.3" font-size="3.6" font-weight="bold" fill="#fff" text-anchor="middle" textLength="13.7" lengthAdjust="spacingAndGlyphs">>6...30</text><text x="102.45" y="79.3" font-size="3.6" font-weight="bold" fill="#fff" text-anchor="middle" textLength="14.1" lengthAdjust="spacingAndGlyphs">>30...120</text><text x="118.85" y="79.3" font-size="3.6" font-weight="bold" fill="#fff" text-anchor="middle" textLength="14.3" lengthAdjust="spacingAndGlyphs">>120...400</text><text x="135.0" y="79.3" font-size="3.6" font-weight="bold" fill="#fff" text-anchor="middle" textLength="13.6" lengthAdjust="spacingAndGlyphs">>400...1000</text><text x="151.15" y="79.3" font-size="3.6" font-weight="bold" fill="#fff" text-anchor="middle" textLength="14.3" lengthAdjust="spacingAndGlyphs">>1000...2000</text><text x="17" y="86.5" font-size="4.3" font-weight="bold" fill="#fff" textLength="17" lengthAdjust="spacingAndGlyphs">Machining</text><text x="54.05" y="86.5" font-size="4.6" font-weight="bold" fill="#fff" text-anchor="middle" textLength="8.0" lengthAdjust="spacingAndGlyphs">±0,05</text><text x="70.3" y="86.5" font-size="4.6" font-weight="bold" fill="#fff" text-anchor="middle" textLength="8.0" lengthAdjust="spacingAndGlyphs">±0,05</text><text x="86.35" y="86.5" font-size="4.6" font-weight="bold" fill="#fff" text-anchor="middle" textLength="6.4" lengthAdjust="spacingAndGlyphs">±0,1</text><text x="102.45" y="86.5" font-size="4.6" font-weight="bold" fill="#fff" text-anchor="middle" textLength="8.0" lengthAdjust="spacingAndGlyphs">±0,15</text><text x="118.85" y="86.5" font-size="4.6" font-weight="bold" fill="#fff" text-anchor="middle" textLength="6.4" lengthAdjust="spacingAndGlyphs">±0,2</text><text x="135.0" y="86.5" font-size="4.6" font-weight="bold" fill="#fff" text-anchor="middle" textLength="6.4" lengthAdjust="spacingAndGlyphs">±0,3</text><text x="151.15" y="86.5" font-size="4.6" font-weight="bold" fill="#fff" text-anchor="middle" textLength="6.4" lengthAdjust="spacingAndGlyphs">±0,5</text><text x="171.10000000000002" y="86.5" font-size="4.6" font-weight="bold" fill="#fff" text-anchor="middle" textLength="1.6" lengthAdjust="spacingAndGlyphs">f</text><text x="194.8" y="86.5" font-size="4.6" font-weight="bold" fill="#fff" text-anchor="middle" textLength="1.6" lengthAdjust="spacingAndGlyphs">H</text><text x="17" y="93.9" font-size="4.3" font-weight="bold" fill="#fff" textLength="13" lengthAdjust="spacingAndGlyphs">General</text><text x="54.05" y="93.9" font-size="4.6" font-weight="bold" fill="#fff" text-anchor="middle" textLength="6.4" lengthAdjust="spacingAndGlyphs">±0,1</text><text x="70.3" y="93.9" font-size="4.6" font-weight="bold" fill="#fff" text-anchor="middle" textLength="6.4" lengthAdjust="spacingAndGlyphs">±0,1</text><text x="86.35" y="93.9" font-size="4.6" font-weight="bold" fill="#fff" text-anchor="middle" textLength="6.4" lengthAdjust="spacingAndGlyphs">±0,2</text><text x="102.45" y="93.9" font-size="4.6" font-weight="bold" fill="#fff" text-anchor="middle" textLength="6.4" lengthAdjust="spacingAndGlyphs">±0,3</text><text x="118.85" y="93.9" font-size="4.6" font-weight="bold" fill="#fff" text-anchor="middle" textLength="6.4" lengthAdjust="spacingAndGlyphs">±0,5</text><text x="135.0" y="93.9" font-size="4.6" font-weight="bold" fill="#fff" text-anchor="middle" textLength="6.4" lengthAdjust="spacingAndGlyphs">±0,8</text><text x="151.15" y="93.9" font-size="4.6" font-weight="bold" fill="#fff" text-anchor="middle" textLength="6.4" lengthAdjust="spacingAndGlyphs">±1,2</text><text x="171.10000000000002" y="93.9" font-size="4.6" font-weight="bold" fill="#fff" text-anchor="middle" textLength="1.6" lengthAdjust="spacingAndGlyphs">m</text><text x="194.8" y="93.9" font-size="4.6" font-weight="bold" fill="#fff" text-anchor="middle" textLength="1.6" lengthAdjust="spacingAndGlyphs">L</text><text x="170.8" y="77.8" font-size="3" font-weight="bold" fill="#e0e0e0" text-anchor="middle">Linear</text><text x="170.8" y="81" font-size="3" font-weight="bold" fill="#e0e0e0" text-anchor="middle">dims</text><text x="194.5" y="77.8" font-size="3" font-weight="bold" fill="#e0e0e0" text-anchor="middle">Geometric</text><text x="194.5" y="81" font-size="3" font-weight="bold" fill="#e0e0e0" text-anchor="middle">dims</text><g stroke="#e8e8e8" stroke-width="0.75" fill="none"><path d="M74.6 245.6L375 150.4M77.5 248.9L375 153.4"/><g transform="rotate(-17.7 224.5 198)"><rect x="216.5" y="195.3" width="4" height="5.4" stroke-width="0.7"/><rect x="227.5" y="195.3" width="4" height="5.4" stroke-width="0.7"/><path d="M220.5 196.3H227.5M220.5 199.7H227.5" stroke-width="0.5"/></g><path d="M52.7 254.4L60.8 242.2H71.2L80.4 254.4"/><circle cx="66.3" cy="250.3" r="2.8"/><circle cx="66.3" cy="250.3" r="1.5" stroke-width="0.5"/><path d="M387.5 254.4H51.5Q49.8 254.4 49.8 256.1V280.6Q49.8 282.3 51.5 282.3H387.5M49.8 260.5H387.5M49.8 277.5H387.5"/><path d="M49.5 255.5L44 256.5L41.5 257.8L44 259L49.5 260"/><circle cx="60.8" cy="257.6" r="1.6"/><circle cx="57" cy="268.5" r="1.3" fill="#ddd"/><circle cx="60.8" cy="280" r="0.9"/><rect x="134.4" y="262.5" width="47.5" height="12.75" rx="1.2"/><circle cx="207" cy="257.5" r="1.3"/><circle cx="211.5" cy="268.5" r="1.4" fill="#ddd"/><circle cx="207" cy="280" r="1.3"/><circle cx="370" cy="257.5" r="1.6"/><circle cx="373" cy="268.5" r="1.4" fill="#ddd"/><circle cx="370" cy="280" r="1.6"/><path d="M50.5 283.5H60.5V289H55V287.5H50.5z" stroke-width="0.6"/><path d="M373.5 254.4L382.6 241.5L388.8 240"/><circle cx="384" cy="243" r="1"/><circle cx="375.5" cy="250" r="1"/><path d="M373.5 282.3L381 296.5H387.5"/><circle cx="384.5" cy="295" r="1"/><path d="M362 283.5H372V288.5H362z" stroke-width="0.6"/><path d="M388.8 128.7V302.6M393.9 131V302.6M410.8 131V302.6M416 131V302.6" /><path d="M420 113V377.5" stroke-width="1.1"/><path d="M431 113V377.5M471.4 113V377.5"/><path d="M386.6 127.5H420V131.7H386.6z" fill="#555"/><path d="M393.5 127.5V125.5H415V127.5" stroke-width="0.5"/><path d="M388.8 302.6H471.4"/><path d="M375.3 144.4L387 136.5M375.3 153.6L387 163M375.3 144.4V153.6"/><circle cx="383.5" cy="148" r="3"/><circle cx="383.5" cy="148" r="1.6" stroke-width="0.5"/><circle cx="390.5" cy="143.5" r="1.3"/><circle cx="402" cy="139" r="1.1" fill="#ddd"/><circle cx="404" cy="144" r="0.8"/><path d="M389 130V125.5Q390 123.5 391 125.5V130"/><path d="M416.5 106.3H475.6V108.5H416.5L415 107.4z"/><path d="M420.9 112.9H471.4"/><path d="M406.3 113.9H415.5V120.8H406.3z" stroke-width="0.6"/><path d="M406.3 120.8V125H415.5" stroke-width="0.5"/><path d="M418 113.5H420V128H418z" stroke-width="0.6"/><circle cx="408.5" cy="117.3" r="1.4"/><circle cx="413.5" cy="117.3" r="1.4"/><path d="M416 122V130" stroke-width="0.6"/><circle cx="436" cy="116" r="1" fill="#ddd"/><circle cx="455" cy="116" r="1" fill="#ddd"/><circle cx="445.5" cy="121" r="1.3"/><path d="M459 111.5H471.5V131H459z"/><circle cx="465" cy="119.5" r="2"/><circle cx="465" cy="125" r="2"/><circle cx="427" cy="118" r="2"/><path d="M427 120V125"/><path d="M471.4 116H473M471.4 121H473M471.4 126H473"/><path d="M406 305H420V320H406z" stroke-width="0.6"/><circle cx="410" cy="309" r="1.2"/><circle cx="415" cy="309" r="1.2"/><circle cx="391" cy="293" r="1.5"/><circle cx="397.5" cy="290" r="1" fill="#ddd"/><circle cx="413" cy="290" r="1"/><circle cx="425.5" cy="292" r="1.3"/><circle cx="425.5" cy="296" r="1.3"/><circle cx="445.5" cy="295" r="0.8"/><circle cx="464" cy="291" r="1.3"/><circle cx="464" cy="296" r="1.3"/><circle cx="425.5" cy="308" r="1.3"/><circle cx="425.5" cy="313" r="1.3"/><circle cx="445" cy="311" r="1.3"/><circle cx="464" cy="308" r="1.3"/><circle cx="464" cy="313" r="1.3"/></g><text x="178.8" y="268.3" font-size="5.8" fill="#e0e0e0" text-anchor="end" textLength="29.5" lengthAdjust="spacingAndGlyphs">Planisveise</text><text x="178.8" y="273.6" font-size="6.4" fill="#e0e0e0" text-anchor="end" textLength="9" lengthAdjust="spacingAndGlyphs">500</text><path d="M411.5 118V140" stroke="#c02020" stroke-width="0.6" stroke-dasharray="2 1"/><path d="M411.5 300V330" stroke="#c02020" stroke-width="0.5" stroke-dasharray="2 1"/><g stroke="#9a9a9a" stroke-width="0.6" fill="none"><path d="M307.5 113H420M313.7 113V191.4M313.7 203.9V282.3M313.7 282.3V290"/><path d="M313.7 113L312.6 119H314.8z" fill="#9a9a9a"/><path d="M313.7 277.5L312.6 271.5H314.8z" fill="#9a9a9a"/><path d="M368 106.2H415M374 94.6V106.2M374 113V125H370"/><path d="M374 106.2L372.9 100.5H375.1z" fill="#9a9a9a"/><path d="M374 113L372.9 118.7H375.1z" fill="#9a9a9a"/><path d="M430.6 83V106M460.6 83V110M430.6 88.6H466"/><path d="M430.6 88.6L436.5 87.5V89.7z" fill="#9a9a9a"/><path d="M460.6 88.6L454.7 87.5V89.7z" fill="#9a9a9a"/><path d="M41.8 262V362M60.2 282.3V341M411 320V340"/><path d="M60.2 336.1H226.9M248.75 336.1H411"/><path d="M60.2 336.1L66.2 335V337.2z" fill="#9a9a9a"/><path d="M411 336.1L405 335V337.2z" fill="#9a9a9a"/><path d="M41.8 360.6H216M238 360.6H420"/><path d="M41.8 360.6L47.8 359.5V361.7z" fill="#9a9a9a"/><path d="M420 360.6L414 359.5V361.7z" fill="#9a9a9a"/></g><text x="306.3" y="200.8" font-size="7.2" fill="#9a9a9a" textLength="14.5" lengthAdjust="spacingAndGlyphs">1002</text><text x="357.8" y="128" font-size="7.2" fill="#9a9a9a" textLength="9.5" lengthAdjust="spacingAndGlyphs">38</text><text x="468.7" y="92" font-size="7.2" fill="#9a9a9a" textLength="11.3" lengthAdjust="spacingAndGlyphs">175</text><text x="229.4" y="339" font-size="6.6" fill="#9a9a9a" textLength="16.2" lengthAdjust="spacingAndGlyphs">2066</text><text x="218.75" y="363.8" font-size="6.6" fill="#9a9a9a" textLength="16.2" lengthAdjust="spacingAndGlyphs">2224</text><g stroke="#e8e8e8" stroke-width="0.75" fill="none"><path d="M584.2 106.2H644.8V108.6H584.2z"/><path d="M589.8 112.7H641.7M589.8 113.9H641.7"/><path d="M588.75 112.7V377.5" stroke-width="1.1"/><path d="M600.6 112.7V377.5M640.5 112.7V377.5" stroke-width="0.6"/><path d="M575.4 113V320" stroke-width="0.6"/><path d="M576 113H600.4V128H576z M589.8 113V128"/><path d="M577 129.3H587V132.5Q582 135.5 577 132.5z" stroke-width="0.6"/><circle cx="595" cy="118" r="2.4"/><path d="M593 121.5L597.5 126" stroke-width="0.9"/><path d="M580 134V320M582.8 134V320M587.9 134V320" stroke-width="0.55"/><path d="M575 141.5Q574 143.5 575 145.5M589 141.5Q590 143.5 589 145.5" stroke-width="0.5"/><circle cx="581.4" cy="212" r="1.5" stroke-width="0.5"/><path d="M579.5 215H583.5" stroke-width="0.5"/><circle cx="578" cy="116" r="1.3"/><circle cx="605" cy="115" r="0.9" fill="#ddd"/><circle cx="624" cy="115" r="0.9" fill="#ddd"/><circle cx="614.5" cy="121" r="1.3"/><circle cx="634" cy="123" r="2.3"/><path d="M641 112H645V130H641z" stroke-width="0.6"/><path d="M643 129H655V131H643z" stroke-width="0.6"/><path d="M592 107V112M606 107V112M626 107V112M639 107V112" stroke-width="0.5"/><path d="M600.6 303.75H641"/><path d="M575.4 240H588V253.9H575.4z M576 254H588V262H576z M581.5 255.5L584 258L581.5 260.5L579 258z M575.4 278H589V299H575.4z M576 299H589V318.5H576z M589 303H600.6V318.5H589z" stroke-width="0.6"/><circle cx="581.5" cy="268.4" r="1.3" stroke-width="0.5"/><path d="M578 283H585V289L581.5 292L578 289z" stroke-width="0.6"/><circle cx="581.5" cy="294" r="1.6" stroke-width="0.5"/><path d="M578.4 262V278M584.6 262V278" stroke-width="0.45"/><path d="M578 303V316M585 303V316" stroke-width="0.5"/><circle cx="595" cy="293" r="1.3"/><circle cx="595" cy="297" r="1.3"/><circle cx="614.5" cy="294.5" r="0.8"/><circle cx="630.5" cy="291" r="1.3"/><circle cx="630.5" cy="296" r="1.3"/><circle cx="595" cy="310" r="1.7"/><circle cx="595" cy="314.6" r="1.4"/><circle cx="614.5" cy="311.5" r="1.1"/><circle cx="630.5" cy="310" r="1.3"/><circle cx="630.5" cy="314" r="1.3"/><path d="M594 305V320H600" stroke-width="0.5"/><path d="M642 290V298M642 308V318" stroke-width="0.5"/><circle cx="582" cy="185" r="1.4"/><path d="M581 189V197M583 189V197" stroke-width="0.5"/></g><g stroke="#8e1e1e" stroke-width="0.65" stroke-dasharray="3.5 0.8 0.8 0.8" fill="none"><path d="M399 358L495 338.75M399 369L495 350M566 357.5L661 338.75M566 368.75L661 350"/></g><g stroke="#b02020" stroke-width="0.8" stroke-dasharray="3 1 1 1" fill="none"><path d="M568 86V109.8H657.4V86M648.7 97V140"/></g><path d="M565 98H571L568 109.5z M654.4 98H660.4L657.4 109.5z" fill="#f39a1e"/><text x="568" y="76" font-size="6" fill="#f39a1e" text-anchor="middle">A</text><text x="657.4" y="76" font-size="6" fill="#f39a1e" text-anchor="middle">A</text><path d="M408 71.6H451" stroke="#a01818" stroke-width="0.9"/><path d="M429.4 64.5V92.6" stroke="#30a030" stroke-width="0.8"/><path d="M28.1 361V336.6" stroke="#2a8a2a" stroke-width="0.9"/><path d="M25 336.6H31.3L28.15 328z" fill="none" stroke="#2a9a2a" stroke-width="0.9"/><path d="M31.3 364H54.4" stroke="#a02020" stroke-width="0.9"/><path d="M54.4 361V367L63.7 364z" fill="none" stroke="#b02020" stroke-width="0.9"/><rect x="25.6" y="361.3" width="6" height="6.2" fill="none" stroke="#c8c8c8" stroke-width="0.7"/><path d="M26.3 317L28.75 319.9L31.2 317M28.75 319.9V322.6M70 361.3L75.2 366.9M75.2 361.3L70 366.9" stroke="#b0b0b0" stroke-width="0.65" fill="none"/><rect x="654" y="67" width="23" height="5.5" fill="#2e2e2e"/><path d="M664 68.5h2.5v2.5h-2.5z M671 68.3l2.5 2.7M673.5 68.3l-2.5 2.7" stroke="#888" stroke-width="0.5" fill="none"/></g></svg>
<div class="a" style="left:14.5px;top:377.5px;width:665px;height:9px;background:#eef0f3"></div><svg style="left:0px;top:0px" width="800" height="433" viewBox="0 0 800 433"><rect x="15.5" y="378.5" width="6" height="6" fill="#f4f4f4" stroke="#b5b5b5" stroke-width="0.5"/><rect x="22.5" y="378.5" width="6" height="6" fill="#f4f4f4" stroke="#b5b5b5" stroke-width="0.5"/><rect x="29.5" y="378.5" width="6" height="6" fill="#f4f4f4" stroke="#b5b5b5" stroke-width="0.5"/><rect x="36.5" y="378.5" width="6" height="6" fill="#f4f4f4" stroke="#b5b5b5" stroke-width="0.5"/><rect x="43.5" y="378.5" width="6" height="6" fill="#f4f4f4" stroke="#b5b5b5" stroke-width="0.5"/><path d="M17.5 379.5V383.5M21 379.5L18.5 381.5L21 383.5z" fill="#333" stroke="#333" stroke-width="0.6"/><path d="M26.5 379.5L24 381.5L26.5 383.5z" fill="#333"/><path d="M31 379.5L33.5 381.5L31 383.5z" fill="#333"/><path d="M38 379.5L40.5 381.5L38 383.5zM41 379.5V383.5" fill="#333" stroke="#333" stroke-width="0.6"/><path d="M46.5 379.5V383.5M44.5 381.5H48.5" stroke="#333" stroke-width="1"/><path d="M52 377.5L55 385.5H72L74 377.5" fill="#fff" stroke="#777" stroke-width="0.6"/><path d="M74 385.5L76 378H95L97.5 385.5M97.5 385.5L100 378H120L122 385.5" fill="none" stroke="#888" stroke-width="0.6"/></svg><div class="t" style="left:56.5px;top:379.2px;font-size:5px;color:#222;font-weight:bold">Model</div><div class="t" style="left:77.5px;top:379.3px;font-size:4.75px;color:#333;">Layout1</div><div class="t" style="left:102px;top:379.3px;font-size:4.75px;color:#333;">Layout2</div>
<div class="a" style="left:679px;top:64px;width:107px;height:322px;background:#f2f2f2"></div>
<div class="a" style="left:679px;top:64px;width:3px;height:322px;background:#3a3a3a"></div>
<div class="a" style="left:682px;top:65px;width:104px;height:8px;background:#c6c6c6"></div>
<div class="a" style="left:683px;top:66px;width:1.5px;height:6px;background:repeating-linear-gradient(#888 0 0.7px,transparent 0.7px 1.5px)"></div>
<div class="t" style="left:687px;top:66.2px;font-size:6.0px;color:#222;font-weight:bold">Tool Palettes - All Palettes</div>
<div class="a" style="left:682px;top:73px;width:7.5px;height:313px;background:#ececec;border-right:1px solid #c8c8c8"></div>
<div class="a" style="left:778px;top:76px;width:6.5px;height:307px;background:#e6e6e6"></div>
<div class="a" style="left:778px;top:83px;width:6.5px;height:176px;background:#c9c9c9"></div>
<div class="a" style="left:682.5px;top:74.8px;width:7px;height:23.0px;background:linear-gradient(90deg,#fbd98a,#f6c160);border:1px solid #d9a040;border-left:none;border-radius:0 1.5px 1.5px 0"></div><div class="t" style="left:666px;top:84.0px;width:40px;text-align:center;font-size:4.8px;color:#333;transform:rotate(-90deg)">Modify</div><div class="a" style="left:682.5px;top:98px;width:7px;height:22px;background:#eeeeee;border:1px solid #c9c9c9;border-left:none;border-radius:0 1.5px 1.5px 0"></div><div class="t" style="left:666px;top:106.7px;width:40px;text-align:center;font-size:4.8px;color:#333;transform:rotate(-90deg)">Inquiry</div><div class="a" style="left:682.5px;top:120.5px;width:7px;height:19.0px;background:#eeeeee;border:1px solid #c9c9c9;border-left:none;border-radius:0 1.5px 1.5px 0"></div><div class="t" style="left:666px;top:127.7px;width:40px;text-align:center;font-size:4.8px;color:#333;transform:rotate(-90deg)">View</div><div class="a" style="left:682.5px;top:140px;width:7px;height:26px;background:#eeeeee;border:1px solid #c9c9c9;border-left:none;border-radius:0 1.5px 1.5px 0"></div><div class="t" style="left:666px;top:150.7px;width:40px;text-align:center;font-size:4.8px;color:#333;transform:rotate(-90deg)">3D Orbit</div><div class="a" style="left:682.5px;top:167px;width:7px;height:32.5px;background:#eeeeee;border:1px solid #c9c9c9;border-left:none;border-radius:0 1.5px 1.5px 0"></div><div class="t" style="left:666px;top:180.95px;width:40px;text-align:center;font-size:4.8px;color:#333;transform:rotate(-90deg)">Draw Order</div><svg style="left:0;top:0" width="800" height="433" viewBox="0 0 800 433"><defs><clipPath id="pc"><rect x="689.5" y="73" width="88" height="312"/></clipPath></defs><g clip-path="url(#pc)"><g transform="translate(691.5,76.50)"><rect x="0.5" y="0.5" width="5" height="4" fill="#fff" stroke="#8896a6" stroke-width="0.6"/><rect x="5" y="6" width="6" height="4.5" fill="#fff" stroke="#2e4660" stroke-width="0.9"/><path d="M6 2.5H8V6" fill="none" stroke="#d22" stroke-width="0.8"/></g><g transform="translate(691.5,92.35)"><rect x="0.5" y="0.5" width="5" height="4" fill="#fff" stroke="#2e4660" stroke-width="0.8"/><rect x="3" y="4" width="5" height="4" fill="#fff" stroke="#2e4660" stroke-width="0.8"/><rect x="6" y="7" width="5" height="4" fill="#fff" stroke="#2e4660" stroke-width="0.8"/><path d="M6 2.5H8V4" fill="none" stroke="#d22" stroke-width="0.8"/></g><g transform="translate(691.5,108.20)"><circle cx="2.5" cy="2.5" r="2.3" fill="#1f5fbf"/><circle cx="8.5" cy="8.5" r="2.5" fill="#1f5fbf"/><path d="M4.5 3H7.5V6" fill="none" stroke="#d22" stroke-width="0.8"/></g><g transform="translate(691.5,124.05)"><path d="M1 11V5H3V2H9V11M3 11V7H5V4H7V11" fill="none" stroke="#2e4660" stroke-width="0.9"/></g><g transform="translate(691.5,139.90)"><rect x="0.5" y="0.5" width="10" height="10" fill="none" stroke="#777" stroke-width="0.6" stroke-dasharray="1 0.8"/><rect x="0.5" y="5.5" width="5" height="5" fill="#fff" stroke="#2e4660" stroke-width="0.8"/></g><g transform="translate(691.5,155.75)"><path d="M1.5 1.5L9.5 9.5M9.5 1.5L1.5 9.5" stroke="#e02a2a" stroke-width="1.7"/></g><g transform="translate(691.5,171.60)"><path d="M1.5 4A4.2 4.2 0 0 0 9.5 4" fill="none" stroke="#1f5fbf" stroke-width="1.3"/><path d="M5.5 1v4M3.5 3h4" stroke="#d22" stroke-width="0.8"/><path d="M0.5 5L1.5 2.5L3 5z" fill="#1f5fbf"/></g><g transform="translate(691.5,187.45)"><path d="M1.5 5.5A4.2 3 0 0 0 9.5 5.5" fill="none" stroke="#1f5fbf" stroke-width="1.3"/><path d="M5.5 0V11" stroke="#d22" stroke-width="0.7" stroke-dasharray="1 0.7"/></g><g transform="translate(691.5,203.30)"><path d="M5 1L1 10H5z" fill="none" stroke="#2e4660" stroke-width="0.8"/><path d="M6 1L10 10H6z" fill="#f0b0b0" stroke="#888" stroke-width="0.6"/><path d="M5.5 0V11" stroke="#d22" stroke-width="0.6"/></g><g transform="translate(691.5,219.15)"><path d="M1 10L3 1L5.5 10z M10 10L8 1L5.5 10z" fill="#9fd0a8" stroke="#3a8a4a" stroke-width="0.7"/><path d="M5.5 0V11" stroke="#d22" stroke-width="0.6"/></g><g transform="translate(691.5,235.00)"><rect x="0.5" y="0.5" width="3.2" height="3.2" fill="#1f5fbf"/><rect x="7" y="0.5" width="3.2" height="3.2" fill="#1f5fbf"/><rect x="0.5" y="7" width="3.2" height="3.2" fill="#3a3a3a"/><rect x="7" y="7" width="3.2" height="3.2" fill="#1f5fbf"/></g><g transform="translate(691.5,250.85)"><circle cx="5.5" cy="1.5" r="1.2" fill="#1f5fbf"/><circle cx="9" cy="4" r="1.2" fill="#1f5fbf"/><circle cx="8" cy="8.5" r="1.2" fill="#1f5fbf"/><circle cx="3" cy="8.5" r="1.2" fill="#1f5fbf"/><circle cx="2" cy="4" r="1.2" fill="#1f5fbf"/></g><g transform="translate(691.5,266.70)"><path d="M1 10C2 3 7 2 10 9" fill="none" stroke="#2e4660" stroke-width="0.7"/><circle cx="1.5" cy="7" r="1.4" fill="#1f5fbf"/><circle cx="5" cy="3" r="1.4" fill="#1f5fbf"/><circle cx="9" cy="6" r="1.4" fill="#1f5fbf"/></g><g transform="translate(691.5,282.55)"><rect x="0.5" y="0.5" width="3.2" height="3.2" fill="#1f5fbf"/><rect x="7" y="0.5" width="3.2" height="3.2" fill="#1f5fbf"/><rect x="0.5" y="7" width="3.2" height="3.2" fill="#1f5fbf"/><path d="M4 9L10 3" stroke="#e0a030" stroke-width="1.2"/></g><g transform="translate(691.5,298.40)"><path d="M1 2V10H10V2H7" fill="none" stroke="#2a8a3a" stroke-width="1"/><path d="M3 2H5L7 0" fill="none" stroke="#2e4660" stroke-width="0.6"/></g><g transform="translate(691.5,314.25)"><rect x="1" y="2.5" width="9" height="6.5" fill="none" stroke="#2a8a3a" stroke-width="1.1"/></g><g transform="translate(691.5,330.10)"><rect x="1" y="2.5" width="8" height="6" fill="none" stroke="#2a8a3a" stroke-width="1"/><path d="M5 0V11" stroke="#333" stroke-width="0.6"/></g><g transform="translate(691.5,345.95)"><path d="M1 4L4 1H10V7L7 10H1z M1 4H7V10M7 4L10 1" fill="none" stroke="#555" stroke-width="0.6"/></g><g transform="translate(691.5,361.80)"><rect x="0.5" y="5" width="3" height="5" fill="none" stroke="#2e4660" stroke-width="0.7"/><rect x="6.5" y="0.5" width="3.5" height="9.5" fill="none" stroke="#2e4660" stroke-width="0.7"/><path d="M3.5 5L6.5 1" stroke="#888" stroke-width="0.4" stroke-dasharray="0.6 0.6"/></g><g transform="translate(691.5,377.65)"><path d="M1 1L8 8" stroke="#2e4660" stroke-width="0.8"/></g></g></svg><div class="t" style="left:706px;top:80.40px;font-size:5.2px;letter-spacing:-0.1px;color:#333;">Move</div><div class="t" style="left:706px;top:96.25px;font-size:5.2px;letter-spacing:-0.1px;color:#333;">Copy</div><div class="t" style="left:706px;top:112.10px;font-size:5.2px;letter-spacing:-0.1px;color:#333;">Clone</div><div class="t" style="left:706px;top:127.95px;font-size:5.2px;letter-spacing:-0.1px;color:#333;">Offset</div><div class="t" style="left:706px;top:143.80px;font-size:5.2px;letter-spacing:-0.1px;color:#333;">Scale</div><div class="t" style="left:706px;top:159.65px;font-size:5.2px;letter-spacing:-0.1px;color:#333;">Delete</div><div class="t" style="left:706px;top:175.50px;font-size:5.2px;letter-spacing:-0.1px;color:#333;">Rotate</div><div class="t" style="left:706px;top:191.35px;font-size:5.2px;letter-spacing:-0.1px;color:#333;">3D Rotate</div><div class="t" style="left:706px;top:207.20px;font-size:5.2px;letter-spacing:-0.1px;color:#333;">Mirror</div><div class="t" style="left:706px;top:223.05px;font-size:5.2px;letter-spacing:-0.1px;color:#333;">3D Mirror</div><div class="t" style="left:706px;top:238.90px;font-size:5.2px;letter-spacing:-0.1px;color:#333;">Rectangular Array</div><div class="t" style="left:706px;top:254.75px;font-size:5.2px;letter-spacing:-0.1px;color:#333;">Polar Array</div><div class="t" style="left:706px;top:270.60px;font-size:5.2px;letter-spacing:-0.1px;color:#333;">Path Array</div><div class="t" style="left:706px;top:286.45px;font-size:5.2px;letter-spacing:-0.1px;color:#333;">Array Edit</div><div class="t" style="left:706px;top:302.30px;font-size:5.2px;letter-spacing:-0.1px;color:#333;">Break</div><div class="t" style="left:706px;top:318.15px;font-size:5.2px;letter-spacing:-0.1px;color:#333;">Join</div><div class="t" style="left:706px;top:334.00px;font-size:5.2px;letter-spacing:-0.1px;color:#333;">Trim</div><div class="t" style="left:706px;top:349.85px;font-size:5.2px;letter-spacing:-0.1px;color:#333;">Flatten</div><div class="t" style="left:706px;top:365.70px;font-size:5.2px;letter-spacing:-0.1px;color:#333;">Align</div><div class="t" style="left:706px;top:381.55px;font-size:5.2px;letter-spacing:-0.1px;color:#333;clip-path:inset(0 0 1.5px 0)">Extend</div><div class="t" style="left:779px;top:76.5px;font-size:5px;color:#666;">&#8963;</div><div class="t" style="left:779.2px;top:376.5px;font-size:5px;color:#666;">&#8964;</div>
<div class="a" style="left:786px;top:57px;width:14px;height:329px;background:#e4e8ee;border-left:1px solid #c0c5cc"></div>
<svg style="left:0px;top:0px" width="800" height="433" viewBox="0 0 800 433"><g transform="translate(787.2,60.0)"><rect x="1" y="1" width="3.5" height="3" fill="#fff" stroke="#888" stroke-width="0.5"/><rect x="3.5" y="4" width="4" height="3" fill="#fff" stroke="#333" stroke-width="0.6"/></g><g transform="translate(787.2,69.3)"><rect x="1" y="1" width="3.5" height="3" fill="#fff" stroke="#333" stroke-width="0.5"/><rect x="2.5" y="3" width="3.5" height="3" fill="#fff" stroke="#333" stroke-width="0.5"/><rect x="4" y="5" width="3.5" height="3" fill="#fff" stroke="#333" stroke-width="0.5"/></g><g transform="translate(787.2,77.60000000000001)"><circle cx="2.5" cy="2.5" r="1.8" fill="#1f5fbf"/><circle cx="6" cy="6" r="1.8" fill="#1f5fbf"/></g><g transform="translate(787.2,86.8)"><path d="M1.5 8V4.5H3V2.5H7.5V8" fill="none" stroke="#333" stroke-width="0.6"/></g><g transform="translate(787.2,96.10000000000001)"><rect x="1" y="1" width="6.5" height="6.5" fill="none" stroke="#777" stroke-width="0.5" stroke-dasharray="0.8 0.6"/><rect x="1" y="4" width="3.5" height="3.5" fill="none" stroke="#333" stroke-width="0.6"/></g><g transform="translate(787.2,105.3)"><path d="M1.5 1.5L7 7M7 1.5L1.5 7" stroke="#e02020" stroke-width="1.2"/></g><g transform="translate(787.2,117.3)"><path d="M1 3.5A3.2 3.2 0 0 0 7.5 3.5" fill="none" stroke="#1f5fbf" stroke-width="1"/><circle cx="4.3" cy="3.5" r="0.7" fill="#d22"/></g><g transform="translate(787.2,126.60000000000001)"><path d="M1 4.5A3.2 2.5 0 0 0 7.5 4.5" fill="none" stroke="#1f5fbf" stroke-width="1"/><path d="M4.3 1V8" stroke="#d22" stroke-width="0.5"/></g><g transform="translate(787.2,139.6)"><path d="M4 1L1 7.5H4z" fill="none" stroke="#333" stroke-width="0.6"/><path d="M4.5 1L7.5 7.5H4.5z" fill="#f0b0b0" stroke="#888" stroke-width="0.4"/></g><g transform="translate(787.2,148.79999999999998)"><path d="M1 7.5L2.5 1L4.3 7.5z M7.5 7.5L6 1L4.3 7.5z" fill="#9fd0a8" stroke="#3a8a4a" stroke-width="0.5"/></g><g transform="translate(787.2,161.7)"><rect x="1" y="1" width="2.5" height="2.5" fill="#1f5fbf"/><rect x="5" y="1" width="2.5" height="2.5" fill="#1f5fbf"/><rect x="1" y="5" width="2.5" height="2.5" fill="#333"/><rect x="5" y="5" width="2.5" height="2.5" fill="#1f5fbf"/></g><g transform="translate(787.2,174.1)"><rect x="1" y="2" width="6.5" height="5" fill="none" stroke="#2a8a3a" stroke-width="0.9"/></g><g transform="translate(787.2,182.7)"><rect x="1" y="2" width="6.5" height="5" fill="none" stroke="#2a8a3a" stroke-width="0.9"/></g><g transform="translate(787.2,191.29999999999998)"><rect x="1" y="2" width="6.5" height="5" fill="none" stroke="#2a8a3a" stroke-width="0.8"/><path d="M4.3 0.5V8.5" stroke="#333" stroke-width="0.5"/></g><g transform="translate(787.2,204.6)"><path d="M1 3L3 1H7.5V6L5.5 8H1z" fill="none" stroke="#666" stroke-width="0.5"/></g><g transform="translate(787.2,217.7)"><rect x="1" y="4" width="2" height="3.5" fill="none" stroke="#333" stroke-width="0.5"/><rect x="5" y="1" width="2.5" height="6.5" fill="none" stroke="#333" stroke-width="0.5"/></g><g transform="translate(787.2,230.29999999999998)"><path d="M1 2L3.5 1L7.5 7" fill="none" stroke="#333" stroke-width="0.6"/></g><g transform="translate(787.2,242.5)"><path d="M1 2H7.5M1 4H7.5" stroke="#555" stroke-width="0.6"/><rect x="1" y="5.5" width="6.5" height="2" fill="#f2b640"/></g><g transform="translate(787.2,255.09999999999997)"><path d="M1.5 7.5V4L4.5 1.5H7.5V7.5z" fill="none" stroke="#333" stroke-width="0.6"/></g><g transform="translate(787.2,267.7)"><path d="M1 7L7 2" stroke="#333" stroke-width="0.6"/><path d="M2 5H7" stroke="#e0a030" stroke-width="0.9"/></g><g transform="translate(787.2,276.0)"><path d="M1 7C3 7 3 2 7 2" fill="none" stroke="#333" stroke-width="0.7"/><circle cx="6.5" cy="2.5" r="1" fill="#e0a030"/></g><g transform="translate(787.2,285.0)"><path d="M1 7.5L3.5 1.5L6 7.5M2 5.5H5" fill="none" stroke="#1f5fbf" stroke-width="0.8"/><path d="M5 6L7.5 3.5" stroke="#e0a030" stroke-width="0.9"/></g><g transform="translate(787.2,297.9)"><path d="M1.5 2L7 7" stroke="#e02020" stroke-width="1.6"/><path d="M5 5L7 7" stroke="#f0c040" stroke-width="1.6"/></g><g transform="translate(787.2,307.09999999999997)"><path d="M1.5 5L4 2L7 5L4 8z" fill="#f0c040"/><circle cx="2.5" cy="6" r="1.3" fill="#e02020"/><circle cx="6" cy="2.5" r="1.3" fill="#2aa040"/></g><g transform="translate(787.2,319.09999999999997)"><rect x="1" y="2" width="5" height="5" fill="#fff" stroke="#5a8a6a" stroke-width="0.6"/></g><g transform="translate(787.2,329.3)"><rect x="3" y="1" width="4.5" height="3.5" fill="#e02020"/><rect x="1" y="3.5" width="4.5" height="4" fill="#445" /></g><g transform="translate(787.2,337.59999999999997)"><rect x="1" y="1" width="6.5" height="6.5" fill="#fff" stroke="#667" stroke-width="0.5"/><path d="M1 3.5H7.5M4 1V7.5" stroke="#667" stroke-width="0.5"/></g></svg><div class="a" style="left:788px;top:116px;width:10px;height:0.6px;background:#c8cdd4"></div><div class="a" style="left:788px;top:138.3px;width:10px;height:0.6px;background:#c8cdd4"></div><div class="a" style="left:788px;top:160.5px;width:10px;height:0.6px;background:#c8cdd4"></div><div class="a" style="left:788px;top:173px;width:10px;height:0.6px;background:#c8cdd4"></div><div class="a" style="left:788px;top:202px;width:10px;height:0.6px;background:#c8cdd4"></div><div class="a" style="left:788px;top:214.4px;width:10px;height:0.6px;background:#c8cdd4"></div><div class="a" style="left:788px;top:228px;width:10px;height:0.6px;background:#c8cdd4"></div><div class="a" style="left:788px;top:239.4px;width:10px;height:0.6px;background:#c8cdd4"></div><div class="a" style="left:788px;top:252.2px;width:10px;height:0.6px;background:#c8cdd4"></div><div class="a" style="left:788px;top:265.7px;width:10px;height:0.6px;background:#c8cdd4"></div><div class="a" style="left:788px;top:296px;width:10px;height:0.6px;background:#c8cdd4"></div><div class="a" style="left:788px;top:318px;width:10px;height:0.6px;background:#c8cdd4"></div>
<svg style="left:0px;top:0px" width="800" height="433" viewBox="0 0 800 433"><defs><clipPath id="lc"><rect x="0" y="60" width="14" height="326"/></clipPath></defs><g clip-path="url(#lc)"><g transform="translate(2.3,60.3)"><path d="M1 7L6 2" stroke="#3a5a86" stroke-width="0.9"/><circle cx="7" cy="7" r="0.8" fill="#222"/></g><g transform="translate(2.3,69.4)"><path d="M3 1.5C1 2 1 6 3.5 6.5H7" fill="none" stroke="#3a5a86" stroke-width="0.9"/></g><g transform="translate(2.3,77.7)"><path d="M1 6.5L6 1.5M2.5 8L7.5 3" stroke="#3a5a86" stroke-width="0.9"/></g><g transform="translate(2.3,87.4)"><path d="M1 7C2 3 4 7 5 3L7 1.5" fill="none" stroke="#3a5a86" stroke-width="0.9"/></g><g transform="translate(2.3,97.1)"><path d="M1 7C2 3 4 7 5 3" fill="none" stroke="#3a5a86" stroke-width="0.9"/><path d="M4.5 6L7.5 3" stroke="#e0a030" stroke-width="1"/></g><g transform="translate(2.3,109.2)"><path d="M1.5 6A3 3 0 1 1 6 6.5" fill="none" stroke="#3a5a86" stroke-width="0.8"/><rect x="5.5" y="5.5" width="2" height="2" fill="#222"/></g><g transform="translate(2.3,119.1)"><path d="M1 7C1 3 4 1.5 6 1.5" fill="none" stroke="#3a5a86" stroke-width="0.8"/><circle cx="6.5" cy="6" r="0.8" fill="#222"/></g><g transform="translate(2.3,128.1)"><ellipse cx="4" cy="5" rx="3" ry="2.3" fill="none" stroke="#3a5a86" stroke-width="0.8"/></g><g transform="translate(2.3,137.2)"><path d="M1.5 5A3 3 0 1 1 6 6" fill="none" stroke="#3a5a86" stroke-width="0.8"/></g><g transform="translate(2.3,149)"><circle cx="4" cy="4" r="0.7" fill="#333"/></g><g transform="translate(2.3,161.5)"><path d="M1 2H7M1 3.5H7M1 5H7M1 6.5H7" stroke="#3a5a86" stroke-width="0.8"/></g><g transform="translate(2.3,171.6)"><rect x="1" y="1.5" width="5" height="4.5" fill="none" stroke="#3a5a86" stroke-width="0.8"/><path d="M5 6L7 7.5" stroke="#333" stroke-width="0.6"/></g><g transform="translate(2.3,180.7)"><rect x="1" y="1.5" width="6" height="6" fill="#fff" stroke="#3a5a86" stroke-width="1"/><rect x="3" y="3.5" width="2.5" height="2.5" fill="#3a5a86"/></g><g transform="translate(2.3,189.7)"><path d="M1.5 2.5L4 1.5L6.5 3V7H2z" fill="none" stroke="#3a5a86" stroke-width="0.7"/></g><g transform="translate(2.3,201.5)"><circle cx="4" cy="4" r="2.8" fill="none" stroke="#3a5a86" stroke-width="0.6"/><circle cx="4" cy="4" r="1.3" fill="none" stroke="#3a5a86" stroke-width="0.5"/></g><g transform="translate(2.3,210.5)"><path d="M1 1.5H7L4.5 5" fill="none" stroke="#3a5a86" stroke-width="0.8"/><circle cx="5" cy="6" r="1" fill="none" stroke="#333" stroke-width="0.5"/></g><g transform="translate(2.3,219.6)"><path d="M1.5 7.5V4A2.5 2.5 0 0 1 4 1.5H7" fill="none" stroke="#3a5a86" stroke-width="1.2"/></g><g transform="translate(2.3,232.5)"><rect x="1" y="1.5" width="5" height="4" fill="none" stroke="#3a5a86" stroke-width="0.7"/><path d="M5 5H7.5" stroke="#333" stroke-width="0.6"/></g><g transform="translate(2.3,245)"><rect x="1" y="1.5" width="6" height="5" fill="#fff" stroke="#3a5a86" stroke-width="0.9"/><path d="M1 3H7M1 4.5H7M3 1.5V6.5" stroke="#3a5a86" stroke-width="0.4"/></g><g transform="translate(2.3,254)"><path d="M1 7L4 1L7 7M2 5H6" fill="none" stroke="#1f5fbf" stroke-width="0.9"/><path d="M1 8H7" stroke="#1f5fbf" stroke-width="0.5"/></g><g transform="translate(2.3,263.75)"><path d="M1 7L4 1L7 7M2 5H6" fill="none" stroke="#1f5fbf" stroke-width="1"/></g><g transform="translate(2.3,282.25)"><path d="M1 3L4 1L7 3M7 5L4 7L1 5" fill="none" stroke="#1f5fbf" stroke-width="1.1"/></g><g transform="translate(2.3,293.4)"><path d="M2 7V3.5C2 2 3 1.5 4 1.5S6 2 6 3.5V7z" fill="none" stroke="#888" stroke-width="0.6"/></g><g transform="translate(2.3,303)"><circle cx="3.5" cy="3.5" r="2.5" fill="none" stroke="#3a5a86" stroke-width="0.8"/><path d="M5.5 5.5L7.5 7.5" stroke="#3a5a86" stroke-width="0.9"/></g><g transform="translate(2.3,312.8)"><circle cx="3.5" cy="3.5" r="2.5" fill="#fff" stroke="#3a5a86" stroke-width="0.8"/><path d="M1.5 5L4 3L5.5 6" fill="#1f5fbf"/><path d="M5.5 5.5L7.5 7.5" stroke="#3a5a86" stroke-width="0.9"/></g><g transform="translate(2.3,321.8)"><circle cx="3.5" cy="3.5" r="2.5" fill="none" stroke="#3a5a86" stroke-width="0.8"/><path d="M2.5 3.5H4.5M3.5 2.5V4.5" stroke="#3a5a86" stroke-width="0.5"/><path d="M5.5 5.5L7.5 7.5" stroke="#3a5a86" stroke-width="0.9"/></g><g transform="translate(2.3,330.9)"><circle cx="4" cy="3.5" r="2.5" fill="none" stroke="#3a5a86" stroke-width="0.8"/><path d="M3.5 5.5L1 7.5" stroke="#3a5a86" stroke-width="0.9"/></g><g transform="translate(2.3,340.3)"><circle cx="3.5" cy="3.5" r="2.5" fill="none" stroke="#3a5a86" stroke-width="0.8"/><path d="M2.5 3.5H4.5M3.5 2.5V4.5" stroke="#2a8a3a" stroke-width="0.6"/><path d="M5.5 5.5L7.5 7.5" stroke="#3a5a86" stroke-width="0.9"/></g><g transform="translate(2.3,349.4)"><circle cx="3.5" cy="3.5" r="2.5" fill="#fff" stroke="#3a5a86" stroke-width="0.8"/><circle cx="3.5" cy="3.5" r="1.2" fill="#1f5fbf"/><path d="M5.5 5.5L7.5 7.5" stroke="#3a5a86" stroke-width="0.9"/></g><g transform="translate(2.3,358.4)"><circle cx="3.5" cy="3.5" r="2.5" fill="none" stroke="#3a5a86" stroke-width="0.8"/><path d="M2.3 3.5H4.7" stroke="#3a5a86" stroke-width="0.6"/><path d="M5.5 5.5L7.5 7.5" stroke="#3a5a86" stroke-width="0.9"/></g><g transform="translate(2.3,370.2)"><circle cx="3.5" cy="3.5" r="2.5" fill="none" stroke="#3a8a5a" stroke-width="0.8"/><path d="M2.3 3.5H4.7M3.5 2.3V4.7" stroke="#3a8a5a" stroke-width="0.5"/><path d="M5.5 5.5L7.5 7.5" stroke="#3a8a5a" stroke-width="0.9"/></g><g transform="translate(2.3,379.2)"><path d="M1 6A3 3 0 0 1 7 6" fill="none" stroke="#d04040" stroke-width="0.9"/></g></g></svg><div class="a" style="left:2px;top:107.4px;width:10px;height:0.6px;background:#c3c8d0"></div><div class="a" style="left:2px;top:148px;width:10px;height:0.6px;background:#c3c8d0"></div><div class="a" style="left:2px;top:159.5px;width:10px;height:0.6px;background:#c3c8d0"></div><div class="a" style="left:2px;top:200px;width:10px;height:0.6px;background:#c3c8d0"></div><div class="a" style="left:2px;top:229px;width:10px;height:0.6px;background:#c3c8d0"></div><div class="a" style="left:2px;top:242.5px;width:10px;height:0.6px;background:#c3c8d0"></div><div class="a" style="left:2px;top:279.5px;width:10px;height:0.6px;background:#c3c8d0"></div><div class="a" style="left:2px;top:369px;width:10px;height:0.6px;background:#c3c8d0"></div>
<div class="a" style="left:0;top:386px;width:800px;height:34px;background:#d5d9df"></div><div class="a" style="left:0;top:386px;width:800px;height:1.5px;background:#b8bdc5"></div><div class="a" style="left:8px;top:387.7px;width:784px;height:23.3px;background:#fff"></div><div class="a" style="left:8px;top:411px;width:784px;height:9px;background:#fff;border-top:1px solid #d3d5d8"></div><div class="t" style="left:2.2px;top:389.3px;font-size:4.6px;color:#444;">&#10005;</div><div class="t" style="left:2.2px;top:398.2px;font-size:4.6px;color:#222;">&#9660;</div><div class="t" style="left:9px;top:389px;font-size:6px;letter-spacing:-0.6px;font-family:'Liberation Mono',monospace;color:#222">Command:</div><div class="t" style="left:9px;top:395px;font-size:6px;letter-spacing:-0.6px;font-family:'Liberation Mono',monospace;color:#222">Command:&nbsp;&nbsp;_ABOUT</div><div class="t" style="left:9px;top:400px;font-size:6px;letter-spacing:-0.6px;font-family:'Liberation Mono',monospace;color:#222">Command:</div><div class="t" style="left:9px;top:406px;font-size:6px;letter-spacing:-0.6px;font-family:'Liberation Mono',monospace;color:#222">Command:&nbsp;&nbsp;_ABOUT</div><div class="t" style="left:40.3px;top:400px;font-size:6px;letter-spacing:-0.6px;font-family:'Liberation Mono',monospace;color:#222">'</div><div class="t" style="left:42.6px;top:400px;font-size:6px;letter-spacing:-0.6px;font-family:'Liberation Mono',monospace;color:#222">_LICENSEMANAGER</div><div class="t" style="left:9px;top:413.7px;font-size:6px;letter-spacing:-0.6px;font-family:'Liberation Mono',monospace;color:#222">Command:</div><div class="a" style="left:792px;top:388px;width:8px;height:23px;background:#f2f2f2"></div><div class="a" style="left:793px;top:395.5px;width:6px;height:7px;background:#cdcdcd"></div><div class="t" style="left:793.5px;top:388.5px;font-size:4.5px;color:#555;">&#8963;</div><div class="t" style="left:793.5px;top:404.5px;font-size:4.5px;color:#555;">&#8964;</div>
<div class="a" style="left:0;top:420px;width:800px;height:13px;background:linear-gradient(#d9dbde 0,#d9dbde 1px,#e6e8ec 1.5px,#d2d6dd 3px,#aab0ba 5.5px,#abb1bb 8px,#c1c4cd 13px)"></div><div class="t" style="left:2px;top:424.6px;font-size:4.85px;color:#333;">Cuts parts off the selection, using other entities as a die</div><svg style="left:0px;top:0px" width="800" height="433" viewBox="0 0 800 433"><path d="M455 421V433" stroke="#b9bec6" stroke-width="0.5"/><path d="M516 421V433" stroke="#b9bec6" stroke-width="0.5"/><path d="M551 421V433" stroke="#b9bec6" stroke-width="0.5"/><path d="M560 421V433" stroke="#b9bec6" stroke-width="0.5"/><path d="M586 421V433" stroke="#b9bec6" stroke-width="0.5"/><path d="M598 421V433" stroke="#b9bec6" stroke-width="0.5"/><path d="M626 421V433" stroke="#b9bec6" stroke-width="0.5"/><path d="M638 421V433" stroke="#b9bec6" stroke-width="0.5"/><path d="M651 421V433" stroke="#b9bec6" stroke-width="0.5"/><path d="M664 421V433" stroke="#b9bec6" stroke-width="0.5"/><path d="M676 421V433" stroke="#b9bec6" stroke-width="0.5"/><path d="M686 421V433" stroke="#b9bec6" stroke-width="0.5"/><path d="M704 421V433" stroke="#b9bec6" stroke-width="0.5"/><path d="M722 421V433" stroke="#b9bec6" stroke-width="0.5"/><path d="M736 421V433" stroke="#b9bec6" stroke-width="0.5"/><path d="M748 421V433" stroke="#b9bec6" stroke-width="0.5"/><path d="M760 421V433" stroke="#b9bec6" stroke-width="0.5"/><path d="M773 421V433" stroke="#b9bec6" stroke-width="0.5"/><path d="M786 421V433" stroke="#b9bec6" stroke-width="0.5"/><path d="M460 427.5H466M463 424.5V430.5" stroke="#e02020" stroke-width="1.1"/><rect x="518" y="422" width="9.5" height="10" fill="#dbe8f7" stroke="#6a9bd8" stroke-width="0.6"/><rect x="563" y="422" width="9.5" height="10" fill="#dbe8f7" stroke="#6a9bd8" stroke-width="0.6"/><rect x="603" y="422" width="9.5" height="10" fill="#dbe8f7" stroke="#6a9bd8" stroke-width="0.6"/><rect x="615" y="422" width="9.5" height="10" fill="#dbe8f7" stroke="#6a9bd8" stroke-width="0.6"/><rect x="652" y="422" width="9.5" height="10" fill="#dbe8f7" stroke="#6a9bd8" stroke-width="0.6"/><rect x="665" y="422" width="9.5" height="10" fill="#dbe8f7" stroke="#6a9bd8" stroke-width="0.6"/><path d="M522.5 423V431M519 427H526" stroke="#2a62b0" stroke-width="0.6"/><path d="M523 423L526 426" stroke="#e02020" stroke-width="0.6"/><path d="M530 427.5H538" stroke="#e02020" stroke-width="0.9"/><path d="M535 425.5L538 427.5L535 429.5" fill="none" stroke="#e02020" stroke-width="0.7"/><path d="M546 424V428L542 431M546 428L550 431" fill="none" stroke="#555" stroke-width="0.7"/><path d="M568 424V428L564.5 431M568 428L571.5 431" fill="none" stroke="#555" stroke-width="0.7"/><circle cx="570" cy="429" r="1.4" fill="#f0c020"/><path d="M579 424V428L575.5 431M579 428L582.5 431" fill="none" stroke="#555" stroke-width="0.7"/><path d="M588 424H592M588 426H591M588 428H592M588 430H591" stroke="#e06060" stroke-width="0.5"/><path d="M605 425H611M605 427H611M605 429H611M606 423.5V430.5M608 423.5V430.5M610 423.5V430.5" stroke="#333" stroke-width="0.5"/><rect x="617" y="424.5" width="2" height="1" fill="#333"/><rect x="618.5" y="427.5" width="5" height="2" fill="#333"/><path d="M628 423.5V431H635" fill="none" stroke="#2a8a3a" stroke-width="0.7"/><path d="M628 431H631" stroke="#e02020" stroke-width="0.7"/><circle cx="644" cy="427.5" r="3.2" fill="none" stroke="#555" stroke-width="0.7"/><circle cx="644.5" cy="427.5" r="1" fill="#e02020"/><rect x="654" y="424" width="6" height="6.5" fill="#fff" stroke="#333" stroke-width="0.6"/><circle cx="654.5" cy="424" r="1" fill="#e02020"/><path d="M667 431L672.5 424.5M667 431H673" stroke="#333" stroke-width="0.6"/><path d="M678 425H684M678 427.5H684M678 430H684" stroke="#333" stroke-width="0.8"/><path d="M729 423.5L730 425.5L732 424.5L731.5 426.8L733.5 427.5L731.5 428.2L732 430.5L730 429.5L729 431.5L728 429.5L726 430.5L726.5 428.2L724.5 427.5L726.5 426.8L726 424.5L728 425.5z" fill="#2a6ad0"/><circle cx="729" cy="427.5" r="1" fill="#d8dce2"/><circle cx="741" cy="425.5" r="1.8" fill="none" stroke="#444" stroke-width="0.9"/><path d="M739.5 427L739 431.5L741 430L743 431.5L742.5 427" fill="#444"/><rect x="750.5" y="423.5" width="6.5" height="5" fill="#bcd7f0" stroke="#4a7ab0" stroke-width="0.6"/><path d="M752 431H756M754 428.5V431" stroke="#4a7ab0" stroke-width="0.6"/><rect x="762" y="423" width="5.5" height="4.5" fill="#fff" stroke="#2a5a90" stroke-width="0.6"/><rect x="765" y="426.5" width="6" height="5" fill="#fff" stroke="#2a5a90" stroke-width="0.6"/><circle cx="778.5" cy="427.5" r="3.2" fill="#fff" stroke="#444" stroke-width="0.7"/><path d="M778.5 426V429.5" stroke="#444" stroke-width="0.8"/><circle cx="791.5" cy="427.5" r="3.5" fill="#3aa84a"/><path d="M789.8 427.5L791.2 429L793.5 426" fill="none" stroke="#fff" stroke-width="0.8"/></svg><div class="t" style="left:470px;top:425.2px;font-size:4.65px;color:#333;">255.1523,405.7805,0</div><div class="t" style="left:553px;top:425.3px;font-size:4.3px;color:#333;">1:1</div><div class="t" style="left:687px;top:425px;font-size:4.6px;color:#444;font-weight:bold">MODEL</div><div class="t" style="left:705px;top:425px;font-size:4.6px;color:#b0b4ba;font-weight:bold">TABLET</div></body></html>
